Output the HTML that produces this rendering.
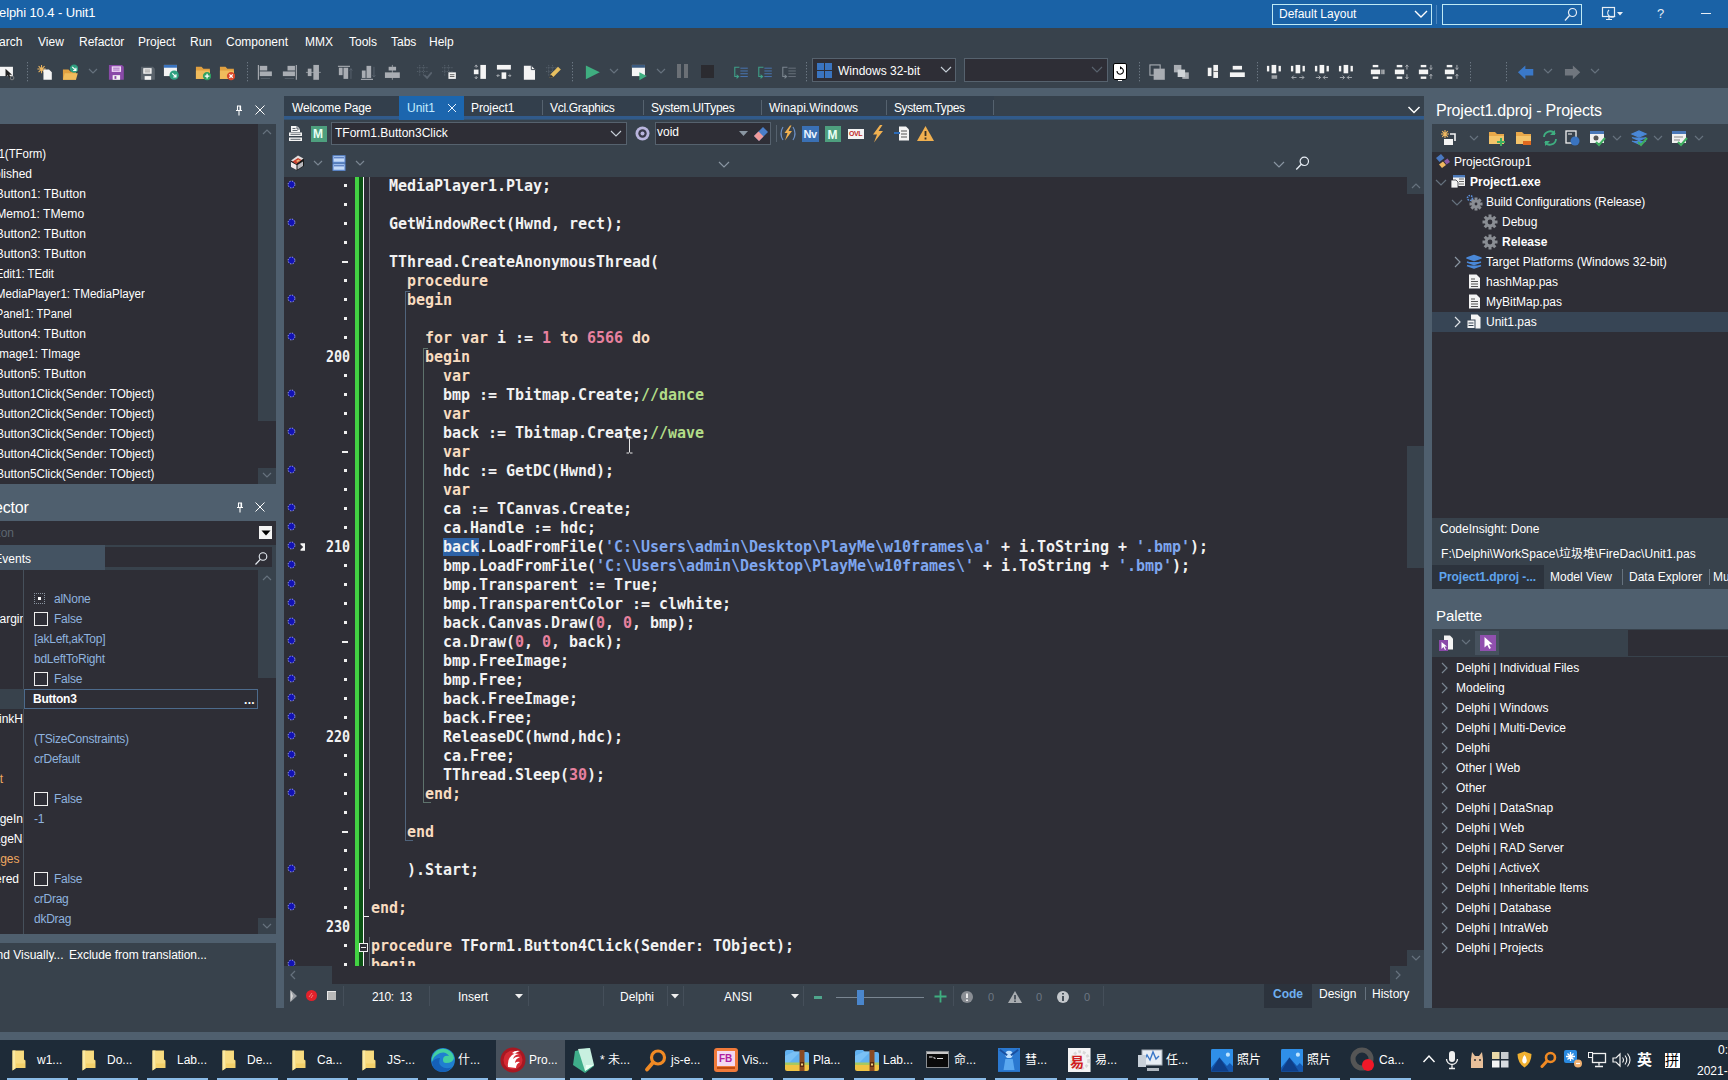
<!DOCTYPE html>
<html lang="en"><head><meta charset="utf-8"><title>Delphi 10.4 - Unit1</title>
<style>
html,body{margin:0;padding:0;}
body{width:1728px;height:1080px;overflow:hidden;background:#38424c;position:relative;font-family:"Liberation Sans","Noto Sans CJK SC",sans-serif;}
body div,body svg{position:absolute;}
.t{white-space:pre;line-height:20px;height:20px;}
.b{font-weight:bold;}
.clip{overflow:hidden;}
.code{font-family:"DejaVu Sans Mono","Liberation Mono",monospace;font-weight:bold;font-size:15px;letter-spacing:-0.031px;line-height:19px;height:19px;white-space:pre;color:#f2f2f2;}
.kw{color:#f8dcc0;}
.num{color:#e8819f;}
.str{color:#7ea6ee;}
.cm{color:#b2dc88;}
.ln{font-family:"DejaVu Sans Mono","Liberation Mono",monospace;font-weight:bold;font-size:15px;line-height:19px;height:19px;color:#f2f2f2;white-space:pre;letter-spacing:-0.031px;}
</style></head>
<body>
<div style="left:0px;top:0px;width:1728px;height:28px;background:#1a62a6;"></div>
<div class="t " style="left:-1px;top:3.0px;font-size:13px;color:#fff;letter-spacing:-0.1px;">elphi 10.4 - Unit1</div>
<div style="left:1272px;top:3.5px;width:160px;height:21px;background:#1a62a6;border:1px solid #bfeaf5;box-sizing:border-box;"></div>
<div class="t " style="left:1279px;top:3.5px;font-size:12px;color:#fff;">Default Layout</div>
<svg style="left:1414px;top:9px;" width="14" height="10" viewBox="0 0 14 10"><path d="M1 2 L7 8 L13 2" fill="none" stroke="#fff" stroke-width="1.4"/></svg>
<div style="left:1436px;top:5px;width:1px;height:19px;background:#4d86bf;"></div>
<div style="left:1442px;top:3.5px;width:140px;height:21px;background:#1a62a6;border:1px solid #bfeaf5;box-sizing:border-box;"></div>
<svg style="left:1562px;top:6px;" width="18" height="18" viewBox="0 0 18 18"><circle cx="10.5" cy="6.5" r="4" fill="none" stroke="#e8eef5" stroke-width="1.2"/><path d="M7.5 9.5 L3 14.5" stroke="#e8eef5" stroke-width="1.3"/></svg>
<svg style="left:1600px;top:4px;" width="26" height="20" viewBox="0 0 26 20"><rect x="2.5" y="3.5" width="12" height="9" fill="none" stroke="#e8eef5" stroke-width="1.2"/><path d="M6 15.5 h6 M9 12.5 v3" stroke="#e8eef5" stroke-width="1.2"/><path d="M9 6 a4 4 0 1 0 6 6" fill="none" stroke="#e8eef5" stroke-width="1.2"/><path d="M17 8 h6 l-3 3.5z" fill="#e8eef5"/></svg>
<div class="t " style="left:1657px;top:3.5px;font-size:13px;color:#e8eef5;">?</div>
<div style="left:1701px;top:13px;width:10px;height:1px;background:#e8eef5;"></div>
<div style="left:0px;top:28px;width:1728px;height:28px;background:#38424c;"></div>
<div class="t " style="left:-1px;top:31.5px;font-size:12px;color:#fff;">arch</div>
<div class="t " style="left:38px;top:31.5px;font-size:12px;color:#fff;">View</div>
<div class="t " style="left:79px;top:31.5px;font-size:12px;color:#fff;">Refactor</div>
<div class="t " style="left:138px;top:31.5px;font-size:12px;color:#fff;">Project</div>
<div class="t " style="left:190px;top:31.5px;font-size:12px;color:#fff;">Run</div>
<div class="t " style="left:226px;top:31.5px;font-size:12px;color:#fff;">Component</div>
<div class="t " style="left:305px;top:31.5px;font-size:12px;color:#fff;">MMX</div>
<div class="t " style="left:349px;top:31.5px;font-size:12px;color:#fff;">Tools</div>
<div class="t " style="left:391px;top:31.5px;font-size:12px;color:#fff;">Tabs</div>
<div class="t " style="left:429px;top:31.5px;font-size:12px;color:#fff;">Help</div>
<div style="left:0px;top:56px;width:1728px;height:32px;background:#38424c;"></div>
<div style="left:0px;top:88px;width:1728px;height:920px;background:#4f5f6e;"></div>
<div style="left:0px;top:1008px;width:1728px;height:24px;background:#38424c;"></div>
<div style="left:0px;top:1032px;width:1728px;height:8px;background:#4f5f6e;"></div>
<svg style="left:-1.5px;top:63.8px;" width="16.74" height="16.74" viewBox="0 0 18 18"><rect x="0" y="3" width="15" height="10" fill="#f4f4f4"/><path d="M7 5 v9 l2.500-2 l2 4 l1.500-1 l-2-3.500 h3z" fill="#222"/><circle cx="14" cy="15" r="2" fill="none" stroke="#888"/></svg>
<div style="left:27px;top:62px;width:1px;height:1px;background:#6b7783;"></div>
<div style="left:27px;top:63px;width:1px;height:1px;background:#4a545e;"></div>
<div style="left:27px;top:65px;width:1px;height:1px;background:#6b7783;"></div>
<div style="left:27px;top:66px;width:1px;height:1px;background:#4a545e;"></div>
<div style="left:27px;top:68px;width:1px;height:1px;background:#6b7783;"></div>
<div style="left:27px;top:69px;width:1px;height:1px;background:#4a545e;"></div>
<div style="left:27px;top:71px;width:1px;height:1px;background:#6b7783;"></div>
<div style="left:27px;top:72px;width:1px;height:1px;background:#4a545e;"></div>
<div style="left:27px;top:74px;width:1px;height:1px;background:#6b7783;"></div>
<div style="left:27px;top:75px;width:1px;height:1px;background:#4a545e;"></div>
<div style="left:27px;top:77px;width:1px;height:1px;background:#6b7783;"></div>
<div style="left:27px;top:78px;width:1px;height:1px;background:#4a545e;"></div>
<div style="left:27px;top:80px;width:1px;height:1px;background:#6b7783;"></div>
<div style="left:27px;top:81px;width:1px;height:1px;background:#4a545e;"></div>
<svg style="left:35.5px;top:63.8px;" width="16.74" height="16.74" viewBox="0 0 18 18"><path d="M6 1 v9 M1.500 5.500 h9 M2.800 2.300 l6.400 6.400 M9.200 2.300 l-6.400 6.400" stroke="#f0b860" stroke-width="1.100"/><path d="M8 6 h6 l3 3 v8 h-9z" fill="#f4f4f4"/></svg>
<svg style="left:61.5px;top:63.8px;" width="16.74" height="16.74" viewBox="0 0 18 18"><path d="M1 6 h6 l2 2 h6 v9 h-14z" fill="#e0a040"/><path d="M3 10 h14 l-2 7 h-14z" fill="#f0bc5c"/><circle cx="13" cy="5" r="4.500" fill="#2fa080"/><path d="M11 3 l4 4 M15 4 v3 h-3" stroke="#fff" stroke-width="1.200" fill="none"/></svg>
<svg style="left:88px;top:67px;" width="10" height="8" viewBox="0 0 10 8"><path d="M1 2 L5 6 L9 2" fill="none" stroke="#66727e" stroke-width="1.2"/></svg>
<svg style="left:107.5px;top:63.8px;" width="16.74" height="16.74" viewBox="0 0 18 18"><path d="M1 1 h14 l2 2 v14 h-16z" fill="#8a4aa8"/><rect x="4" y="2.500" width="10" height="6" fill="#f0d8f8"/><path d="M5.500 4.500 h7 M5.500 6.500 h7" stroke="#8a4aa8" stroke-width="0.800"/><rect x="5" y="12" width="8" height="5" fill="#f4f4f4"/><rect x="7" y="13" width="2" height="3" fill="#8a4aa8"/></svg>
<svg style="left:139.5px;top:63.8px;" width="16.74" height="16.74" viewBox="0 0 18 18"><path d="M1 3 h13 l2 2 v12 h-15z" fill="#5a636c"/><rect x="3.500" y="4.500" width="9" height="6" fill="#f4f4f4"/><path d="M5 6.500 h6 M5 8.500 h6" stroke="#777" stroke-width="0.800"/><rect x="5" y="13" width="7" height="4" fill="#f4f4f4"/></svg>
<svg style="left:162.5px;top:63.8px;" width="16.74" height="16.74" viewBox="0 0 18 18"><rect x="1" y="1" width="14" height="12" fill="#f4f4f4"/><rect x="1" y="1" width="14" height="3" fill="#3a74c0"/><circle cx="12" cy="12" r="5" fill="#2fa080"/><path d="M10 10 l4 4 M14 11 v3 h-3" stroke="#fff" stroke-width="1.200" fill="none"/></svg>
<svg style="left:194.5px;top:63.8px;" width="16.74" height="16.74" viewBox="0 0 18 18"><path d="M1 3 h6 l2 2 h7 v11 h-15z" fill="#e0a040"/><path d="M1 7 h15 v9 h-15z" fill="#f0bc5c"/><circle cx="13" cy="13" r="4.500" fill="#2fa060"/><path d="M13 10.500 v5 M10.500 13 h5" stroke="#fff" stroke-width="1.400"/></svg>
<svg style="left:218.5px;top:63.8px;" width="16.74" height="16.74" viewBox="0 0 18 18"><path d="M1 3 h6 l2 2 h7 v11 h-15z" fill="#e0a040"/><path d="M1 7 h15 v9 h-15z" fill="#f0bc5c"/><circle cx="13" cy="13" r="4.500" fill="#d8482a"/><path d="M11.200 11.200 l3.600 3.600 M14.800 11.200 l-3.600 3.600" stroke="#fff" stroke-width="1.400"/></svg>
<div style="left:247px;top:62px;width:1px;height:1px;background:#6b7783;"></div>
<div style="left:247px;top:63px;width:1px;height:1px;background:#4a545e;"></div>
<div style="left:247px;top:65px;width:1px;height:1px;background:#6b7783;"></div>
<div style="left:247px;top:66px;width:1px;height:1px;background:#4a545e;"></div>
<div style="left:247px;top:68px;width:1px;height:1px;background:#6b7783;"></div>
<div style="left:247px;top:69px;width:1px;height:1px;background:#4a545e;"></div>
<div style="left:247px;top:71px;width:1px;height:1px;background:#6b7783;"></div>
<div style="left:247px;top:72px;width:1px;height:1px;background:#4a545e;"></div>
<div style="left:247px;top:74px;width:1px;height:1px;background:#6b7783;"></div>
<div style="left:247px;top:75px;width:1px;height:1px;background:#4a545e;"></div>
<div style="left:247px;top:77px;width:1px;height:1px;background:#6b7783;"></div>
<div style="left:247px;top:78px;width:1px;height:1px;background:#4a545e;"></div>
<div style="left:247px;top:80px;width:1px;height:1px;background:#6b7783;"></div>
<div style="left:247px;top:81px;width:1px;height:1px;background:#4a545e;"></div>
<svg style="left:256.5px;top:63.8px;" width="16.74" height="16.74" viewBox="0 0 18 18"><path d="M1.500 1 v16" stroke="#a9adb3" stroke-width="1.200"/><rect x="3" y="2" width="8" height="5" fill="#a9adb3"/><rect x="3" y="8" width="13" height="5" fill="#a9adb3"/><path d="M4 15.500 h10" stroke="#59636e"/></svg>
<svg style="left:280.5px;top:63.8px;" width="16.74" height="16.74" viewBox="0 0 18 18"><path d="M16.500 1 v16" stroke="#a9adb3" stroke-width="1.200"/><rect x="7" y="2" width="8" height="5" fill="#a9adb3"/><rect x="2" y="8" width="13" height="5" fill="#a9adb3"/><path d="M4 15.500 h10" stroke="#59636e"/></svg>
<svg style="left:304.5px;top:63.8px;" width="16.74" height="16.74" viewBox="0 0 18 18"><rect x="3" y="5" width="4" height="8" fill="#a9adb3"/><rect x="9" y="1" width="6" height="16" fill="#a9adb3"/><path d="M1 9 h16" stroke="#a9adb3" stroke-width="0.800"/></svg>
<svg style="left:336.5px;top:63.8px;" width="16.74" height="16.74" viewBox="0 0 18 18"><path d="M1 2.500 h13" stroke="#a9adb3" stroke-width="1.200"/><rect x="2" y="4" width="4" height="8" fill="#a9adb3"/><rect x="7" y="4" width="5" height="12" fill="#a9adb3"/><path d="M15 5 v11 M13.500 7 l1.500-2 l1.500 2" stroke="#59636e" fill="none"/></svg>
<svg style="left:359.5px;top:63.8px;" width="16.74" height="16.74" viewBox="0 0 18 18"><path d="M1 16.500 h13" stroke="#a9adb3" stroke-width="1.200"/><rect x="2" y="7" width="4" height="8" fill="#a9adb3"/><rect x="7" y="2" width="5" height="13" fill="#a9adb3"/><path d="M15 3 v11 M13.500 12 l1.500 2 l1.500-2" stroke="#59636e" fill="none"/></svg>
<svg style="left:383.5px;top:63.8px;" width="16.74" height="16.74" viewBox="0 0 18 18"><rect x="5" y="3" width="8" height="4" fill="#a9adb3"/><rect x="1" y="9" width="16" height="6" fill="#a9adb3"/><path d="M9 1 v16" stroke="#a9adb3" stroke-width="0.800"/></svg>
<svg style="left:415.5px;top:63.8px;" width="16.74" height="16.74" viewBox="0 0 18 18"><path d="M4 1 v12 M8 1 v12 M1 4 h12 M1 8 h12" stroke="#59636e" stroke-width="0.900" stroke-dasharray="1.500 1"/><path d="M9 12 l3 3 l5-6" stroke="#59636e" stroke-width="2" fill="none"/></svg>
<svg style="left:440.5px;top:63.8px;" width="16.74" height="16.74" viewBox="0 0 18 18"><path d="M4 1 v12 M8 1 v12 M1 4 h12 M1 8 h12" stroke="#59636e" stroke-width="0.900" stroke-dasharray="1.500 1"/><rect x="8" y="9" width="8" height="7" fill="#f4f4f4"/><path d="M9.500 11.500 h5 M9.500 13.500 h5" stroke="#444" stroke-width="0.900"/></svg>
<svg style="left:471.5px;top:63.8px;" width="16.74" height="16.74" viewBox="0 0 18 18"><rect x="2" y="6" width="5" height="5" fill="#f4f4f4"/><rect x="9" y="1" width="6" height="15" fill="#f4f4f4"/><path d="M4.500 1 v3 M4.500 13 v3 M3 3 l1.500-2 l1.500 2 M3 14 l1.500 2 l1.500-2" stroke="#a9adb3" fill="none"/></svg>
<svg style="left:495.5px;top:63.8px;" width="16.74" height="16.74" viewBox="0 0 18 18"><rect x="1" y="1" width="15" height="5" fill="#f4f4f4"/><rect x="6" y="9" width="5" height="7" fill="#f4f4f4"/><path d="M1 12.500 h3 M13 12.500 h3 M2.500 11 l-1.500 1.500 l1.500 1.500 M14.500 11 l1.500 1.500 l-1.500 1.500" stroke="#a9adb3" fill="none"/></svg>
<svg style="left:521.5px;top:63.8px;" width="16.74" height="16.74" viewBox="0 0 18 18"><path d="M2 2 h8 l4 4 v11 h-12z" fill="#f4f4f4"/><path d="M10 2 v4 h4" fill="none" stroke="#38424c"/></svg>
<svg style="left:544.5px;top:63.8px;" width="16.74" height="16.74" viewBox="0 0 18 18"><path d="M4 1 v12 M8 1 v12 M1 4 h12 M1 8 h12" stroke="#59636e" stroke-width="0.900" stroke-dasharray="1.500 1"/><path d="M5 15 l1-4 l8-8 l3 3 l-8 8z" fill="#e8c060"/><path d="M5 15 l1-4 l3 3z" fill="#333"/></svg>
<div style="left:572px;top:62px;width:1px;height:1px;background:#6b7783;"></div>
<div style="left:572px;top:63px;width:1px;height:1px;background:#4a545e;"></div>
<div style="left:572px;top:65px;width:1px;height:1px;background:#6b7783;"></div>
<div style="left:572px;top:66px;width:1px;height:1px;background:#4a545e;"></div>
<div style="left:572px;top:68px;width:1px;height:1px;background:#6b7783;"></div>
<div style="left:572px;top:69px;width:1px;height:1px;background:#4a545e;"></div>
<div style="left:572px;top:71px;width:1px;height:1px;background:#6b7783;"></div>
<div style="left:572px;top:72px;width:1px;height:1px;background:#4a545e;"></div>
<div style="left:572px;top:74px;width:1px;height:1px;background:#6b7783;"></div>
<div style="left:572px;top:75px;width:1px;height:1px;background:#4a545e;"></div>
<div style="left:572px;top:77px;width:1px;height:1px;background:#6b7783;"></div>
<div style="left:572px;top:78px;width:1px;height:1px;background:#4a545e;"></div>
<div style="left:572px;top:80px;width:1px;height:1px;background:#6b7783;"></div>
<div style="left:572px;top:81px;width:1px;height:1px;background:#4a545e;"></div>
<svg style="left:583.5px;top:63.8px;" width="16.74" height="16.74" viewBox="0 0 18 18"><path d="M2 1.500 L17 9 L2 16.500z" fill="#3fae80"/></svg>
<svg style="left:609px;top:67px;" width="10" height="8" viewBox="0 0 10 8"><path d="M1 2 L5 6 L9 2" fill="none" stroke="#66727e" stroke-width="1.2"/></svg>
<svg style="left:630.5px;top:63.8px;" width="16.74" height="16.74" viewBox="0 0 18 18"><rect x="1" y="1" width="14" height="12" fill="#f4f4f4"/><rect x="1" y="1" width="14" height="3" fill="#3a5a80"/><path d="M9 9 L17 13 L9 17.500z" fill="#3fae80"/></svg>
<svg style="left:656px;top:67px;" width="10" height="8" viewBox="0 0 10 8"><path d="M1 2 L5 6 L9 2" fill="none" stroke="#66727e" stroke-width="1.2"/></svg>
<div style="left:677px;top:64px;width:4px;height:14px;background:#6b7076;"></div>
<div style="left:684px;top:64px;width:4px;height:14px;background:#6b7076;"></div>
<div style="left:701px;top:65px;width:13px;height:13px;background:#2b2b30;"></div>
<svg style="left:731.5px;top:63.8px;" width="16.74" height="16.74" viewBox="0 0 18 18"><path d="M9 4.500 h8 M9 7.500 h8 M9 10.500 h8 M9 13.500 h8" stroke="#4a78b8" stroke-width="1"/><path d="M8 3.500 h-5 v10 h3" fill="none" stroke="#3f9f88" stroke-width="1.200"/><path d="M5 11 l3 2.500 l-3 2.500z" fill="#3f9f88"/></svg>
<svg style="left:755.5px;top:63.8px;" width="16.74" height="16.74" viewBox="0 0 18 18"><path d="M9 4.500 h8 M9 7.500 h8 M9 10.500 h8 M9 13.500 h8" stroke="#4a78b8" stroke-width="1"/><path d="M8 3.500 h-5 v10 h3" fill="none" stroke="#3f9f88" stroke-width="1.200"/><path d="M5 11 l3 2.500 l-3 2.500z" fill="#3f9f88"/></svg>
<svg style="left:779.5px;top:63.8px;" width="16.74" height="16.74" viewBox="0 0 18 18"><path d="M9 4.500 h8 M9 7.500 h8 M9 10.500 h8 M9 13.500 h8" stroke="#6a747e" stroke-width="1"/><path d="M8 3.500 h-5 v10 h3" fill="none" stroke="#7a848e" stroke-width="1.200"/><path d="M5 11 l3 2.500 l-3 2.500z" fill="#7a848e"/></svg>
<div style="left:806px;top:62px;width:1px;height:1px;background:#6b7783;"></div>
<div style="left:806px;top:63px;width:1px;height:1px;background:#4a545e;"></div>
<div style="left:806px;top:65px;width:1px;height:1px;background:#6b7783;"></div>
<div style="left:806px;top:66px;width:1px;height:1px;background:#4a545e;"></div>
<div style="left:806px;top:68px;width:1px;height:1px;background:#6b7783;"></div>
<div style="left:806px;top:69px;width:1px;height:1px;background:#4a545e;"></div>
<div style="left:806px;top:71px;width:1px;height:1px;background:#6b7783;"></div>
<div style="left:806px;top:72px;width:1px;height:1px;background:#4a545e;"></div>
<div style="left:806px;top:74px;width:1px;height:1px;background:#6b7783;"></div>
<div style="left:806px;top:75px;width:1px;height:1px;background:#4a545e;"></div>
<div style="left:806px;top:77px;width:1px;height:1px;background:#6b7783;"></div>
<div style="left:806px;top:78px;width:1px;height:1px;background:#4a545e;"></div>
<div style="left:806px;top:80px;width:1px;height:1px;background:#6b7783;"></div>
<div style="left:806px;top:81px;width:1px;height:1px;background:#4a545e;"></div>
<div style="left:812px;top:58px;width:144px;height:24px;background:#2e2e36;border:1px solid #56626e;box-sizing:border-box;"></div>
<svg style="left:817px;top:63px;" width="15" height="15" viewBox="0 0 15 15"><rect x="0" y="0" width="7" height="7" fill="#3a74c0"/><rect x="8" y="0" width="7" height="7" fill="#3a74c0"/><rect x="0" y="8" width="7" height="7" fill="#3a74c0"/><rect x="8" y="8" width="7" height="7" fill="#3a74c0"/></svg>
<div class="t " style="left:838px;top:60.5px;font-size:12px;color:#fff;">Windows 32-bit</div>
<svg style="left:940px;top:64px;" width="12" height="10" viewBox="0 0 12 10"><path d="M1 3 L6 8 L11 3" fill="none" stroke="#c8d0d8" stroke-width="1.1"/></svg>
<div style="left:964px;top:58px;width:144px;height:24px;background:#2e2e36;border:1px solid #56626e;box-sizing:border-box;"></div>
<svg style="left:1091px;top:64px;" width="12" height="10" viewBox="0 0 12 10"><path d="M1 3 L6 8 L11 3" fill="none" stroke="#59636e" stroke-width="1.1"/></svg>
<svg style="left:1113px;top:63px;" width="14" height="18" viewBox="0 0 14 18"><rect x="0.500" y="0.500" width="13" height="16" rx="1.500" fill="#fff" stroke="#000" stroke-width="1"/><path d="M4 8 a3.200 3.200 0 1 0 3-3.200" fill="none" stroke="#000" stroke-width="1.100"/><path d="M7 3 l2 2 l-2 1.500z" fill="#000"/><path d="M5 17.500 h4" stroke="#fff" stroke-width="1"/></svg>
<div style="left:1139px;top:62px;width:1px;height:1px;background:#6b7783;"></div>
<div style="left:1139px;top:63px;width:1px;height:1px;background:#4a545e;"></div>
<div style="left:1139px;top:65px;width:1px;height:1px;background:#6b7783;"></div>
<div style="left:1139px;top:66px;width:1px;height:1px;background:#4a545e;"></div>
<div style="left:1139px;top:68px;width:1px;height:1px;background:#6b7783;"></div>
<div style="left:1139px;top:69px;width:1px;height:1px;background:#4a545e;"></div>
<div style="left:1139px;top:71px;width:1px;height:1px;background:#6b7783;"></div>
<div style="left:1139px;top:72px;width:1px;height:1px;background:#4a545e;"></div>
<div style="left:1139px;top:74px;width:1px;height:1px;background:#6b7783;"></div>
<div style="left:1139px;top:75px;width:1px;height:1px;background:#4a545e;"></div>
<div style="left:1139px;top:77px;width:1px;height:1px;background:#6b7783;"></div>
<div style="left:1139px;top:78px;width:1px;height:1px;background:#4a545e;"></div>
<div style="left:1139px;top:80px;width:1px;height:1px;background:#6b7783;"></div>
<div style="left:1139px;top:81px;width:1px;height:1px;background:#4a545e;"></div>
<svg style="left:1148.5px;top:63.8px;" width="16.74" height="16.74" viewBox="0 0 18 18"><rect x="1" y="1" width="11" height="11" fill="none" stroke="#a9adb3" stroke-width="1.200"/><rect x="5" y="5" width="12" height="12" fill="#a9adb3"/></svg>
<svg style="left:1172.5px;top:63.8px;" width="16.74" height="16.74" viewBox="0 0 18 18"><rect x="1" y="1" width="8" height="8" fill="#a9adb3"/><rect x="10" y="9" width="7" height="7" fill="#a9adb3"/><rect x="5" y="6" width="8" height="8" fill="#d0d4d8"/></svg>
<svg style="left:1204.5px;top:63.8px;" width="16.74" height="16.74" viewBox="0 0 18 18"><rect x="3" y="4" width="4" height="9" fill="#f4f4f4"/><rect x="9" y="1" width="5" height="14" fill="#f4f4f4"/><path d="M9 8 h5" stroke="#666"/></svg>
<svg style="left:1228.5px;top:63.8px;" width="16.74" height="16.74" viewBox="0 0 18 18"><rect x="4" y="2" width="10" height="4" fill="#f4f4f4"/><rect x="1" y="9" width="16" height="5" fill="#f4f4f4"/></svg>
<div style="left:1257px;top:62px;width:1px;height:1px;background:#6b7783;"></div>
<div style="left:1257px;top:63px;width:1px;height:1px;background:#4a545e;"></div>
<div style="left:1257px;top:65px;width:1px;height:1px;background:#6b7783;"></div>
<div style="left:1257px;top:66px;width:1px;height:1px;background:#4a545e;"></div>
<div style="left:1257px;top:68px;width:1px;height:1px;background:#6b7783;"></div>
<div style="left:1257px;top:69px;width:1px;height:1px;background:#4a545e;"></div>
<div style="left:1257px;top:71px;width:1px;height:1px;background:#6b7783;"></div>
<div style="left:1257px;top:72px;width:1px;height:1px;background:#4a545e;"></div>
<div style="left:1257px;top:74px;width:1px;height:1px;background:#6b7783;"></div>
<div style="left:1257px;top:75px;width:1px;height:1px;background:#4a545e;"></div>
<div style="left:1257px;top:77px;width:1px;height:1px;background:#6b7783;"></div>
<div style="left:1257px;top:78px;width:1px;height:1px;background:#4a545e;"></div>
<div style="left:1257px;top:80px;width:1px;height:1px;background:#6b7783;"></div>
<div style="left:1257px;top:81px;width:1px;height:1px;background:#4a545e;"></div>
<svg style="left:1265.5px;top:63.8px;" width="16.74" height="16.74" viewBox="0 0 18 18"><rect x="1" y="2" width="2.500" height="6" fill="#f4f4f4"/><rect x="6" y="1" width="5" height="9" fill="#f4f4f4"/><rect x="13.500" y="2" width="2.500" height="6" fill="#f4f4f4"/><path d="M6 13 h6 M6 15 h6" stroke="#f4f4f4" stroke-width="1"/></svg>
<svg style="left:1289.5px;top:63.8px;" width="16.74" height="16.74" viewBox="0 0 18 18"><rect x="1" y="2" width="2.500" height="6" fill="#f4f4f4"/><rect x="6" y="1" width="5" height="9" fill="#f4f4f4"/><rect x="13.500" y="2" width="2.500" height="6" fill="#f4f4f4"/><path d="M2 14.500 h5 M10 14.500 h5 M4 12.500 l-2 2 l2 2 M13 12.500 l2 2 l-2 2" stroke="#a9adb3" fill="none"/></svg>
<svg style="left:1313.5px;top:63.8px;" width="16.74" height="16.74" viewBox="0 0 18 18"><rect x="1" y="2" width="2.500" height="6" fill="#f4f4f4"/><rect x="6" y="1" width="5" height="9" fill="#f4f4f4"/><rect x="13.500" y="2" width="2.500" height="6" fill="#f4f4f4"/><path d="M2 14.500 h5 M10 14.500 h5 M5 12.500 l2 2 l-2 2 M12 12.500 l-2 2 l2 2" stroke="#a9adb3" fill="none"/></svg>
<svg style="left:1337.5px;top:63.8px;" width="16.74" height="16.74" viewBox="0 0 18 18"><rect x="1" y="2" width="2.500" height="6" fill="#f4f4f4"/><rect x="6" y="1" width="5" height="9" fill="#f4f4f4"/><rect x="13.500" y="2" width="2.500" height="6" fill="#f4f4f4"/><path d="M2 14.500 h5 M10 14.500 h5 M5 12.500 l2 2 l-2 2 M12 12.500 l-2 2 l2 2" stroke="#a9adb3" fill="none"/></svg>
<svg style="left:1368.5px;top:63.8px;" width="16.74" height="16.74" viewBox="0 0 18 18"><rect x="4" y="1" width="6" height="2.500" fill="#f4f4f4"/><rect x="2" y="6" width="10" height="5" fill="#f4f4f4"/><rect x="4" y="13.500" width="6" height="2.500" fill="#f4f4f4"/><path d="M14 6 v5 M16 6 v5" stroke="#f4f4f4" stroke-width="1"/></svg>
<svg style="left:1392.5px;top:63.8px;" width="16.74" height="16.74" viewBox="0 0 18 18"><rect x="4" y="1" width="6" height="2.500" fill="#f4f4f4"/><rect x="2" y="6" width="10" height="5" fill="#f4f4f4"/><rect x="4" y="13.500" width="6" height="2.500" fill="#f4f4f4"/><path d="M15 1 v5 M15 11 v5 M13.500 3 l1.500-2 l1.500 2 M13.500 14 l1.500 2 l1.500-2" stroke="#a9adb3" fill="none"/></svg>
<svg style="left:1416.5px;top:63.8px;" width="16.74" height="16.74" viewBox="0 0 18 18"><rect x="4" y="1" width="6" height="2.500" fill="#f4f4f4"/><rect x="2" y="6" width="10" height="5" fill="#f4f4f4"/><rect x="4" y="13.500" width="6" height="2.500" fill="#f4f4f4"/><path d="M15 1 v5 M15 11 v5 M13.500 4 l1.500 2 l1.500-2 M13.500 13 l1.500-2 l1.500 2" stroke="#a9adb3" fill="none"/></svg>
<svg style="left:1442.5px;top:63.8px;" width="16.74" height="16.74" viewBox="0 0 18 18"><rect x="4" y="1" width="6" height="2.500" fill="#f4f4f4"/><rect x="2" y="6" width="10" height="5" fill="#f4f4f4"/><rect x="4" y="13.500" width="6" height="2.500" fill="#f4f4f4"/><path d="M15 1 v5 M15 11 v5 M13.500 4 l1.500 2 l1.500-2 M13.500 13 l1.500-2 l1.500 2" stroke="#a9adb3" fill="none"/></svg>
<div style="left:1470px;top:62px;width:1px;height:1px;background:#6b7783;"></div>
<div style="left:1470px;top:63px;width:1px;height:1px;background:#4a545e;"></div>
<div style="left:1470px;top:65px;width:1px;height:1px;background:#6b7783;"></div>
<div style="left:1470px;top:66px;width:1px;height:1px;background:#4a545e;"></div>
<div style="left:1470px;top:68px;width:1px;height:1px;background:#6b7783;"></div>
<div style="left:1470px;top:69px;width:1px;height:1px;background:#4a545e;"></div>
<div style="left:1470px;top:71px;width:1px;height:1px;background:#6b7783;"></div>
<div style="left:1470px;top:72px;width:1px;height:1px;background:#4a545e;"></div>
<div style="left:1470px;top:74px;width:1px;height:1px;background:#6b7783;"></div>
<div style="left:1470px;top:75px;width:1px;height:1px;background:#4a545e;"></div>
<div style="left:1470px;top:77px;width:1px;height:1px;background:#6b7783;"></div>
<div style="left:1470px;top:78px;width:1px;height:1px;background:#4a545e;"></div>
<div style="left:1470px;top:80px;width:1px;height:1px;background:#6b7783;"></div>
<div style="left:1470px;top:81px;width:1px;height:1px;background:#4a545e;"></div>
<div style="left:1506px;top:62px;width:1px;height:1px;background:#6b7783;"></div>
<div style="left:1506px;top:63px;width:1px;height:1px;background:#4a545e;"></div>
<div style="left:1506px;top:65px;width:1px;height:1px;background:#6b7783;"></div>
<div style="left:1506px;top:66px;width:1px;height:1px;background:#4a545e;"></div>
<div style="left:1506px;top:68px;width:1px;height:1px;background:#6b7783;"></div>
<div style="left:1506px;top:69px;width:1px;height:1px;background:#4a545e;"></div>
<div style="left:1506px;top:71px;width:1px;height:1px;background:#6b7783;"></div>
<div style="left:1506px;top:72px;width:1px;height:1px;background:#4a545e;"></div>
<div style="left:1506px;top:74px;width:1px;height:1px;background:#6b7783;"></div>
<div style="left:1506px;top:75px;width:1px;height:1px;background:#4a545e;"></div>
<div style="left:1506px;top:77px;width:1px;height:1px;background:#6b7783;"></div>
<div style="left:1506px;top:78px;width:1px;height:1px;background:#4a545e;"></div>
<div style="left:1506px;top:80px;width:1px;height:1px;background:#6b7783;"></div>
<div style="left:1506px;top:81px;width:1px;height:1px;background:#4a545e;"></div>
<svg style="left:1516.5px;top:63.8px;" width="17.67" height="16.74" viewBox="0 0 19 18"><path d="M1 9 L9 1.500 V5.500 H17.500 V12.500 H9 V16.500z" fill="#3a78c8"/></svg>
<svg style="left:1543px;top:67px;" width="10" height="8" viewBox="0 0 10 8"><path d="M1 2 L5 6 L9 2" fill="none" stroke="#66727e" stroke-width="1.2"/></svg>
<svg style="left:1563.5px;top:63.8px;" width="17.67" height="16.74" viewBox="0 0 19 18"><path d="M17.500 9 L9.500 1.500 V5.500 H1 V12.500 H9.500 V16.500z" fill="#70767e"/></svg>
<svg style="left:1590px;top:67px;" width="10" height="8" viewBox="0 0 10 8"><path d="M1 2 L5 6 L9 2" fill="none" stroke="#66727e" stroke-width="1.2"/></svg>
<svg style="left:235px;top:104.5px;" width="8" height="11" viewBox="0 0 8 11"><path d="M2 1 h4 M2.500 1 v4.500 M1 5.500 h6 M4 5.500 v5" fill="none" stroke="#fff" stroke-width="1.100"/><rect x="4.500" y="1" width="1.600" height="4.500" fill="#fff"/></svg>
<svg style="left:253.5px;top:103.5px;" width="12" height="12" viewBox="0 0 12 12"><path d="M1.5 1.5 L10.5 10.5 M10.5 1.5 L1.5 10.5" stroke="#fff" stroke-width="1.0"/></svg>
<div style="left:0px;top:124px;width:258px;height:360px;background:#2e2e36;"></div>
<div style="left:258px;top:124px;width:18px;height:360px;background:#2e2e36;"></div>
<div style="left:258px;top:124px;width:18px;height:297px;background:#38424c;"></div>
<div style="left:258px;top:468px;width:18px;height:16px;background:#38424c;"></div>
<svg style="left:262px;top:128px;" width="10" height="8" viewBox="0 0 10 8"><path d="M1 6 L5 2 L9 6" fill="none" stroke="#66727e" stroke-width="1.2"/></svg>
<svg style="left:262px;top:471px;" width="10" height="8" viewBox="0 0 10 8"><path d="M1 2 L5 6 L9 2" fill="none" stroke="#66727e" stroke-width="1.2"/></svg>
<div class="clip" style="left:0;top:124px;width:258px;height:360px;">
<div class="t" style="right:212px;top:20px;font-size:12px;color:#fff;transform:scaleX(0.950);transform-origin:100% 50%;">Form1(TForm)</div>
<div class="t" style="right:226px;top:40px;font-size:12px;color:#fff;transform:scaleX(1.000);transform-origin:100% 50%;">Published</div>
<div class="t" style="right:172px;top:60px;font-size:12px;color:#fff;transform:scaleX(1.002);transform-origin:100% 50%;">Button1: TButton</div>
<div class="t" style="right:174px;top:80px;font-size:12px;color:#fff;transform:scaleX(1.010);transform-origin:100% 50%;">Memo1: TMemo</div>
<div class="t" style="right:172px;top:100px;font-size:12px;color:#fff;transform:scaleX(1.002);transform-origin:100% 50%;">Button2: TButton</div>
<div class="t" style="right:172px;top:120px;font-size:12px;color:#fff;transform:scaleX(1.002);transform-origin:100% 50%;">Button3: TButton</div>
<div class="t" style="right:204px;top:140px;font-size:12px;color:#fff;transform:scaleX(0.939);transform-origin:100% 50%;">Edit1: TEdit</div>
<div class="t" style="right:113px;top:160px;font-size:12px;color:#fff;transform:scaleX(0.969);transform-origin:100% 50%;">MediaPlayer1: TMediaPlayer</div>
<div class="t" style="right:186px;top:180px;font-size:12px;color:#fff;transform:scaleX(0.929);transform-origin:100% 50%;">Panel1: TPanel</div>
<div class="t" style="right:172px;top:200px;font-size:12px;color:#fff;transform:scaleX(1.002);transform-origin:100% 50%;">Button4: TButton</div>
<div class="t" style="right:178px;top:220px;font-size:12px;color:#fff;transform:scaleX(0.964);transform-origin:100% 50%;">Image1: TImage</div>
<div class="t" style="right:172px;top:240px;font-size:12px;color:#fff;transform:scaleX(1.002);transform-origin:100% 50%;">Button5: TButton</div>
<div class="t" style="right:104px;top:260px;font-size:12px;color:#fff;transform:scaleX(0.974);transform-origin:100% 50%;">Button1Click(Sender: TObject)</div>
<div class="t" style="right:104px;top:280px;font-size:12px;color:#fff;transform:scaleX(0.974);transform-origin:100% 50%;">Button2Click(Sender: TObject)</div>
<div class="t" style="right:104px;top:300px;font-size:12px;color:#fff;transform:scaleX(0.974);transform-origin:100% 50%;">Button3Click(Sender: TObject)</div>
<div class="t" style="right:104px;top:320px;font-size:12px;color:#fff;transform:scaleX(0.974);transform-origin:100% 50%;">Button4Click(Sender: TObject)</div>
<div class="t" style="right:104px;top:340px;font-size:12px;color:#fff;transform:scaleX(0.974);transform-origin:100% 50%;">Button5Click(Sender: TObject)</div>
</div>
<div class="t " style="right:1699.3px;top:497.5px;font-size:16px;color:#fff;letter-spacing:-0.2px;">Object Inspector</div>
<svg style="left:235.5px;top:501.5px;" width="8" height="11" viewBox="0 0 8 11"><path d="M2 1 h4 M2.500 1 v4.500 M1 5.500 h6 M4 5.500 v5" fill="none" stroke="#fff" stroke-width="1.100"/><rect x="4.500" y="1" width="1.600" height="4.500" fill="#fff"/></svg>
<svg style="left:253.5px;top:500.5px;" width="12" height="12" viewBox="0 0 12 12"><path d="M1.5 1.5 L10.5 10.5 M10.5 1.5 L1.5 10.5" stroke="#fff" stroke-width="1.0"/></svg>
<div style="left:0px;top:521px;width:276px;height:24px;background:#2e2e36;"></div>
<div class="t " style="right:1714px;top:523.0px;font-size:12px;color:#5d6670;">Button3 TButton</div>
<div style="left:259px;top:526px;width:13px;height:13px;background:#f4f4f4;"></div>
<svg style="left:260.5px;top:530px;" width="10" height="7" viewBox="0 0 10 7"><path d="M0.5 0.5 h9 l-4.5 5z" fill="#000"/></svg>
<div style="left:0px;top:545px;width:276px;height:25px;background:#38424c;"></div>
<div style="left:0px;top:545px;width:105px;height:25px;background:#445362;"></div>
<div class="t " style="right:1697px;top:549.0px;font-size:12px;color:#fff;">Events</div>
<div style="left:105px;top:547px;width:167px;height:20px;background:#2e2e36;"></div>
<svg style="left:253px;top:550px;" width="18" height="18" viewBox="0 0 18 18"><circle cx="10" cy="6.5" r="3.8" fill="none" stroke="#e8eef5" stroke-width="1.1"/><path d="M7.3 9.3 L2.5 14.5" stroke="#e8eef5" stroke-width="1.2"/></svg>
<div style="left:0px;top:570px;width:258px;height:364px;background:#2e2e36;"></div>
<div style="left:23px;top:570px;width:1px;height:364px;background:#46505b;"></div>
<div style="left:258px;top:570px;width:18px;height:364px;background:#2e2e36;"></div>
<div style="left:258px;top:570px;width:18px;height:108px;background:#38424c;"></div>
<div style="left:258px;top:918px;width:18px;height:16px;background:#38424c;"></div>
<svg style="left:262px;top:574px;" width="10" height="8" viewBox="0 0 10 8"><path d="M1 6 L5 2 L9 6" fill="none" stroke="#66727e" stroke-width="1.2"/></svg>
<svg style="left:262px;top:922px;" width="10" height="8" viewBox="0 0 10 8"><path d="M1 2 L5 6 L9 2" fill="none" stroke="#66727e" stroke-width="1.2"/></svg>
<div class="clip" style="left:0;top:570px;width:258px;height:364px;">
<div style="left:0;top:119px;width:24px;height:20px;background:#38424c;"></div>
<div style="left:24px;top:119px;width:234px;height:20px;border:1px solid #4d6b8c;box-sizing:border-box;"></div>
<div class="t" style="left:54px;top:19px;font-size:12px;color:#8fb3df;letter-spacing:-0.25px;">alNone</div>
<div class="t" style="left:54px;top:39px;font-size:12px;color:#8fb3df;letter-spacing:-0.25px;">False</div>
<div class="t" style="left:34px;top:59px;font-size:12px;color:#8fb3df;letter-spacing:-0.25px;">[akLeft,akTop]</div>
<div class="t" style="left:34px;top:79px;font-size:12px;color:#8fb3df;letter-spacing:-0.25px;">bdLeftToRight</div>
<div class="t" style="left:54px;top:99px;font-size:12px;color:#8fb3df;letter-spacing:-0.25px;">False</div>
<div class="t" style="left:33px;top:119px;font-size:12px;color:#fff;letter-spacing:-0.25px;font-weight:bold;">Button3</div>
<div class="t" style="left:244px;top:120px;font-size:12px;color:#fff;letter-spacing:-0.25px;font-weight:bold;letter-spacing:0.3px;">...</div>
<div class="t" style="left:34px;top:159px;font-size:12px;color:#8fb3df;letter-spacing:-0.25px;">(TSizeConstraints)</div>
<div class="t" style="left:34px;top:179px;font-size:12px;color:#8fb3df;letter-spacing:-0.25px;">crDefault</div>
<div class="t" style="left:54px;top:219px;font-size:12px;color:#8fb3df;letter-spacing:-0.25px;">False</div>
<div class="t" style="left:34px;top:239px;font-size:12px;color:#8fb3df;letter-spacing:-0.25px;">-1</div>
<div class="t" style="left:54px;top:299px;font-size:12px;color:#8fb3df;letter-spacing:-0.25px;">False</div>
<div class="t" style="left:34px;top:319px;font-size:12px;color:#8fb3df;letter-spacing:-0.25px;">crDrag</div>
<div class="t" style="left:34px;top:339px;font-size:12px;color:#8fb3df;letter-spacing:-0.25px;">dkDrag</div>
<div class="t" style="left:34px;top:359px;font-size:12px;color:#8fb3df;letter-spacing:-0.25px;">dmManual</div>
<div class="clip" style="left:0;top:0;width:23px;height:364px;">
<div class="t" style="right:3.5px;top:39px;font-size:12px;color:#fff;">AlignWithMargi<span style="position:absolute;left:100%;top:0;">ns</span></div>
<div class="t" style="right:0px;top:139px;font-size:12px;color:#fff;">CommandLinkH<span style="position:absolute;left:100%;top:0;">int</span></div>
<div class="t" style="right:20px;top:199px;font-size:12px;color:#f0a860;">CustomHint<span style="position:absolute;left:100%;top:0;"></span></div>
<div class="t" style="right:0px;top:239px;font-size:12px;color:#fff;">DisabledImageIn<span style="position:absolute;left:100%;top:0;">dex</span></div>
<div class="t" style="right:0.5px;top:259px;font-size:12px;color:#fff;">DisabledImageN<span style="position:absolute;left:100%;top:0;">ame</span></div>
<div class="t" style="right:3.5px;top:279px;font-size:12px;color:#f0a860;">DisabledImages<span style="position:absolute;left:100%;top:0;"></span></div>
<div class="t" style="right:4px;top:299px;font-size:12px;color:#fff;">DoubleBuffered<span style="position:absolute;left:100%;top:0;"></span></div>
</div>
</div>
<div style="left:34px;top:593px;width:11px;height:11px;background:transparent;border:1px dotted #8a94a0;box-sizing:border-box;"></div>
<div style="left:38px;top:597px;width:3px;height:3px;background:#fff;"></div>
<div style="left:34px;top:612px;width:14px;height:14px;background:transparent;border:1px solid #f0f0f0;box-sizing:border-box;"></div>
<div style="left:34px;top:672px;width:14px;height:14px;background:transparent;border:1px solid #f0f0f0;box-sizing:border-box;"></div>
<div style="left:34px;top:792px;width:14px;height:14px;background:transparent;border:1px solid #f0f0f0;box-sizing:border-box;"></div>
<div style="left:34px;top:872px;width:14px;height:14px;background:transparent;border:1px solid #f0f0f0;box-sizing:border-box;"></div>
<div style="left:0px;top:943px;width:276px;height:65px;background:#38424c;"></div>
<div style="left:276px;top:943px;width:8px;height:65px;background:#4f5f6e;"></div>
<div class="t " style="right:1664.5px;top:944.5px;font-size:12px;color:#fff;">Bind Visually...</div>
<div class="t " style="left:69px;top:944.5px;font-size:12px;color:#fff;letter-spacing:-0.03px;">Exclude from translation...</div>
<div style="left:284px;top:96px;width:1140px;height:21px;background:#36414c;"></div>
<div style="left:284px;top:96px;width:710px;height:21px;background:#333f4c;"></div>
<div style="left:284px;top:115.6px;width:1140px;height:4.6px;background:#34526f;"></div>
<div style="left:284px;top:116.4px;width:1140px;height:3px;background:#315a8a;"></div>
<div style="left:399px;top:96px;width:65px;height:24px;background:#1c66ae;"></div>
<div class="t " style="left:292px;top:97.5px;font-size:12px;color:#fff;letter-spacing:-0.15px;">Welcome Page</div>
<div class="t " style="left:407px;top:97.5px;font-size:12px;color:#c4ecff;letter-spacing:0px;">Unit1</div>
<div class="t " style="left:471px;top:97.5px;font-size:12px;color:#fff;letter-spacing:-0.1px;">Project1</div>
<div class="t " style="left:550px;top:97.5px;font-size:12px;color:#fff;letter-spacing:-0.3px;">Vcl.Graphics</div>
<div class="t " style="left:651px;top:97.5px;font-size:12px;color:#fff;letter-spacing:-0.28px;">System.UITypes</div>
<div class="t " style="left:769px;top:97.5px;font-size:12px;color:#fff;letter-spacing:0.03px;">Winapi.Windows</div>
<div class="t " style="left:894px;top:97.5px;font-size:12px;color:#fff;letter-spacing:-0.4px;">System.Types</div>
<svg style="left:446px;top:101.5px;" width="12" height="12" viewBox="0 0 12 12"><path d="M2 2 L10 10 M10 2 L2 10" stroke="#e8f4ff" stroke-width="1"/></svg>
<div style="left:542px;top:100px;width:1px;height:15px;background:#55626f;"></div>
<div style="left:643px;top:100px;width:1px;height:15px;background:#55626f;"></div>
<div style="left:761px;top:100px;width:1px;height:15px;background:#55626f;"></div>
<div style="left:886px;top:100px;width:1px;height:15px;background:#55626f;"></div>
<div style="left:993px;top:100px;width:1px;height:15px;background:#55626f;"></div>
<svg style="left:1406.5px;top:104.5px;" width="14" height="10" viewBox="0 0 14 10"><path d="M1.500 2 L7 7.500 L12.500 2" fill="none" stroke="#fff" stroke-width="1.500"/></svg>
<div style="left:284px;top:120px;width:1140px;height:57px;background:#38424c;"></div>
<div style="left:331px;top:122px;width:296px;height:23px;background:#2e2e36;border:1px solid #56626e;box-sizing:border-box;"></div>
<div class="t " style="left:335px;top:122.5px;font-size:12px;color:#fff;">TForm1.Button3Click</div>
<svg style="left:610px;top:128px;" width="12" height="10" viewBox="0 0 12 10"><path d="M1 3 L6 8 L11 3" fill="none" stroke="#c8d0d8" stroke-width="1.1"/></svg>
<div style="left:655px;top:122px;width:116px;height:23px;background:#2e2e36;border:1px solid #56626e;box-sizing:border-box;"></div>
<div class="t " style="left:657px;top:122.0px;font-size:12px;color:#fff;">void</div>
<svg style="left:739px;top:131px;" width="10" height="6" viewBox="0 0 10 6"><path d="M0 0 h9 l-4.5 5z" fill="#8a96a2"/></svg>
<div style="left:311px;top:126px;width:16px;height:16px;background:#4e9f7e;"></div>
<div class="t " style="left:313px;top:124.0px;font-size:12px;color:#e8fff4;font-weight:bold;">M</div>
<svg style="left:288px;top:125px;" width="15" height="17" viewBox="0 0 15 17"><path d="M3 1 h6 l3 3 v3 h-9z" fill="#f4f4f4"/><path d="M9 1 v3 h3" fill="none" stroke="#38424c" stroke-width="0.8"/><path d="M4.500 3.500 h3 M4.500 5.500 h5" stroke="#38424c" stroke-width="0.8"/><rect x="1" y="7.500" width="13" height="3.500" fill="#f4f4f4"/><rect x="1" y="12.500" width="13" height="3.500" fill="#f4f4f4"/><path d="M2.500 9.300 h10 M2.500 14.300 h10" stroke="#38424c" stroke-width="0.800"/></svg>
<svg style="left:634px;top:125px;" width="17" height="17" viewBox="0 0 17 17"><circle cx="8.500" cy="8.500" r="7" fill="#b9b5dd"/><circle cx="8.500" cy="8.500" r="4.200" fill="#3a3a4a"/><circle cx="8.500" cy="8.500" r="2" fill="#b9b5dd"/></svg>
<svg style="left:752px;top:125px;" width="18" height="17" viewBox="0 0 18 17"><path d="M2 11 L11 2 L16 7 L7 16z" fill="#4a7ec8"/><path d="M2 11 L6.500 6.500 L11.500 11.500 L7 16z" fill="#f09a9a"/></svg>
<div style="left:776px;top:125px;width:1px;height:17px;background:#56626e;"></div>
<svg style="left:778px;top:124px;" width="20" height="19" viewBox="0 0 20 19"><path d="M5 3 q-4 6.5 0 13 M15 3 q4 6.5 0 13" fill="none" stroke="#6b8fc4" stroke-width="1.2"/><path d="M12 1.500 l-5.500 7.500 h3 l-2.500 7.500 l7-9.500 h-3.500 l3-5.500z" fill="#f0b050"/></svg>
<div style="left:802px;top:126px;width:17px;height:16px;background:#3a70b4;"></div>
<div class="t " style="left:803.5px;top:124.0px;font-size:11px;color:#eaf4ff;font-weight:bold;letter-spacing:-0.5px;">Nv</div>
<div style="left:825px;top:126px;width:16px;height:16px;background:#4e9f7e;"></div>
<div class="t " style="left:827.5px;top:124.5px;font-size:12px;color:#e8fff4;font-weight:bold;">M</div>
<div style="left:848px;top:129px;width:16px;height:10px;background:#f4f4f4;"></div>
<div class="t " style="left:849px;top:124.0px;font-size:7px;color:#c02828;font-weight:bold;letter-spacing:-0.4px;">OVL</div>
<svg style="left:871px;top:124px;" width="14" height="19" viewBox="0 0 14 19"><path d="M9 1 l-7 9.500 h4 l-3 8 l9-11.500 h-4.500 l4-6z" fill="#f0b050"/></svg>
<svg style="left:893px;top:125px;" width="18" height="17" viewBox="0 0 18 17"><path d="M6 1.5 h7 l3 3 v11 h-10z" fill="#f4f4f4"/><path d="M8 6 h6 M8 9 h6 M8 12 h6" stroke="#555" stroke-width="1"/><path d="M1 8 h6" stroke="#2d6cb8" stroke-width="2"/></svg>
<svg style="left:916px;top:125px;" width="19" height="17" viewBox="0 0 19 17"><path d="M9.5 1 L18 16 H1z" fill="#f0b050"/><path d="M9.5 6 v5 M9.5 12.5 v2" stroke="#3a3020" stroke-width="1.8"/></svg>
<svg style="left:289px;top:154px;" width="17" height="18" viewBox="0 0 17 18"><path d="M2 7 L9 2 L15 5 L15 12 L8 16.500 L2 13z" fill="#1a1a1a"/><path d="M2 6.500 L9 1.500 L14.500 4.500 L7.500 9.500z" fill="#e4dede"/><path d="M3.500 7.500 L9 4 L12.500 6 L7 10z" fill="#c8402e"/><path d="M7 7 l2.500-1.500 l1.500 1 l-2.500 1.500z" fill="#f0b878"/><path d="M2 8 L7.500 11 V16 L2 13z" fill="#f0e8e8"/><path d="M8.500 11 L14 7.500 V12 L8.500 15.500z" fill="#b8b8bc"/></svg>
<svg style="left:313.4px;top:159px;" width="10" height="8" viewBox="0 0 10 8"><path d="M1 2 L5 6 L9 2" fill="none" stroke="#7a8692" stroke-width="1.2"/></svg>
<svg style="left:331.5px;top:155px;" width="14" height="16" viewBox="0 0 14 16"><rect x="1" y="0.800" width="12" height="6.500" fill="#c4daf8" stroke="#5a86d0" stroke-width="1.100"/><path d="M2 2.800 h10" stroke="#3a62b0" stroke-width="1"/><rect x="1" y="8.800" width="12" height="6.500" fill="#c4daf8" stroke="#5a86d0" stroke-width="1.100"/><path d="M2 10.800 h10" stroke="#3a62b0" stroke-width="1"/></svg>
<svg style="left:354.5px;top:159px;" width="10" height="8" viewBox="0 0 10 8"><path d="M1 2 L5 6 L9 2" fill="none" stroke="#7a8692" stroke-width="1.2"/></svg>
<svg style="left:717.5px;top:158.5px;" width="12" height="10" viewBox="0 0 12 10"><path d="M1 3 L6 8 L11 3" fill="none" stroke="#8a96a2" stroke-width="1.2"/></svg>
<svg style="left:1272.5px;top:158.5px;" width="12" height="10" viewBox="0 0 12 10"><path d="M1 3 L6 8 L11 3" fill="none" stroke="#8a96a2" stroke-width="1.2"/></svg>
<svg style="left:1294px;top:155px;" width="16" height="16" viewBox="0 0 16 16"><circle cx="10.300" cy="6.300" r="4.200" fill="none" stroke="#e8eef5" stroke-width="1.200"/><path d="M7.300 9.300 L2.300 14.500" stroke="#e8eef5" stroke-width="1.300"/></svg>
<div style="left:284px;top:177px;width:1123px;height:789px;background:#2e2e36;"></div>
<div style="left:1407px;top:177px;width:17px;height:789px;background:#2e2e36;"></div>
<div style="left:1407px;top:177px;width:17px;height:17px;background:#38424c;"></div>
<div style="left:1407px;top:446px;width:17px;height:122px;background:#38424c;"></div>
<div style="left:1407px;top:950px;width:17px;height:16px;background:#38424c;"></div>
<svg style="left:1410.5px;top:182px;" width="10" height="8" viewBox="0 0 10 8"><path d="M1 6 L5 2 L9 6" fill="none" stroke="#66727e" stroke-width="1.2"/></svg>
<svg style="left:1410.5px;top:954px;" width="10" height="8" viewBox="0 0 10 8"><path d="M1 2 L5 6 L9 2" fill="none" stroke="#66727e" stroke-width="1.2"/></svg>
<div style="left:284px;top:966px;width:1140px;height:18px;background:#2e2e36;"></div>
<div style="left:284px;top:966px;width:48px;height:18px;background:#38424c;"></div>
<div style="left:1390px;top:966px;width:34px;height:18px;background:#38424c;"></div>
<svg style="left:289px;top:970px;" width="8" height="10" viewBox="0 0 8 10"><path d="M6 1 L2 5 L6 9" fill="none" stroke="#66727e" stroke-width="1.2"/></svg>
<svg style="left:1394px;top:970px;" width="8" height="10" viewBox="0 0 8 10"><path d="M2 1 L6 5 L2 9" fill="none" stroke="#66727e" stroke-width="1.2"/></svg>
<div class="clip" style="left:284px;top:177px;width:1123px;height:789px;">
<div style="left:70.60000000000002px;top:0;width:4.6px;height:789px;background:#43d243;"></div>
<div style="left:75.19999999999999px;top:0;width:3.5px;height:789px;background:#0b5313;"></div>
<div style="left:78.89999999999998px;top:0;width:1.4px;height:789px;background:#f4f4f4;"></div>
<div style="left:85.19999999999999px;top:0;width:1px;height:712px;background:#77797e;"></div>
<div class="code" style="left:105px;top:-0.5px;">MediaPlayer1.Play;</div>
<div style="left:60px;top:7.0px;width:3px;height:3px;background:#f0f0f0;"></div>
 <svg style="left:3px;top:3.4000000000000004px;" width="9" height="9" viewBox="0 0 9 9"><circle cx="4.500" cy="4.500" r="3.400" fill="#1212b4" stroke="#b8c0ff" stroke-width="0.900" stroke-dasharray="1.300 1.370"/></svg>
<div style="left:60px;top:26.0px;width:3px;height:3px;background:#f0f0f0;"></div>
<div class="code" style="left:105px;top:37.5px;">GetWindowRect(Hwnd, rect);</div>
<div style="left:60px;top:45.0px;width:3px;height:3px;background:#f0f0f0;"></div>
 <svg style="left:3px;top:41.4px;" width="9" height="9" viewBox="0 0 9 9"><circle cx="4.500" cy="4.500" r="3.400" fill="#1212b4" stroke="#b8c0ff" stroke-width="0.900" stroke-dasharray="1.300 1.370"/></svg>
<div style="left:60px;top:64.0px;width:3px;height:3px;background:#f0f0f0;"></div>
<div class="code" style="left:105px;top:75.5px;">TThread.CreateAnonymousThread(</div>
<div style="left:58px;top:83.5px;width:6px;height:2px;background:#f0f0f0;"></div>
 <svg style="left:3px;top:79.4px;" width="9" height="9" viewBox="0 0 9 9"><circle cx="4.500" cy="4.500" r="3.400" fill="#1212b4" stroke="#b8c0ff" stroke-width="0.900" stroke-dasharray="1.300 1.370"/></svg>
<div class="code" style="left:123px;top:94.5px;"><span class="kw">procedure</span></div>
<div style="left:60px;top:102.0px;width:3px;height:3px;background:#f0f0f0;"></div>
<div class="code" style="left:123px;top:113.5px;"><span class="kw">begin</span></div>
<div style="left:60px;top:121.0px;width:3px;height:3px;background:#f0f0f0;"></div>
 <svg style="left:3px;top:117.4px;" width="9" height="9" viewBox="0 0 9 9"><circle cx="4.500" cy="4.500" r="3.400" fill="#1212b4" stroke="#b8c0ff" stroke-width="0.900" stroke-dasharray="1.300 1.370"/></svg>
<div style="left:60px;top:140.0px;width:3px;height:3px;background:#f0f0f0;"></div>
<div class="code" style="left:141px;top:151.5px;"><span class="kw">for var</span> i := <span class="num">1</span> <span class="kw">to</span> <span class="num">6566</span> <span class="kw">do</span></div>
<div style="left:60px;top:159.0px;width:3px;height:3px;background:#f0f0f0;"></div>
 <svg style="left:3px;top:155.4px;" width="9" height="9" viewBox="0 0 9 9"><circle cx="4.500" cy="4.500" r="3.400" fill="#1212b4" stroke="#b8c0ff" stroke-width="0.900" stroke-dasharray="1.300 1.370"/></svg>
<div class="code" style="left:141px;top:170.5px;"><span class="kw">begin</span></div>
<div class="ln" style="right:1057px;top:170.5px;transform:scaleX(0.89);transform-origin:100% 50%;">200</div>
<div class="code" style="left:159px;top:189.5px;"><span class="kw">var</span></div>
<div style="left:60px;top:197.0px;width:3px;height:3px;background:#f0f0f0;"></div>
<div class="code" style="left:159px;top:208.5px;">bmp := Tbitmap.Create;<span class="cm">//dance</span></div>
<div style="left:60px;top:216.0px;width:3px;height:3px;background:#f0f0f0;"></div>
 <svg style="left:3px;top:212.4px;" width="9" height="9" viewBox="0 0 9 9"><circle cx="4.500" cy="4.500" r="3.400" fill="#1212b4" stroke="#b8c0ff" stroke-width="0.900" stroke-dasharray="1.300 1.370"/></svg>
<div class="code" style="left:159px;top:227.5px;"><span class="kw">var</span></div>
<div style="left:60px;top:235.0px;width:3px;height:3px;background:#f0f0f0;"></div>
<div class="code" style="left:159px;top:246.5px;">back := Tbitmap.Create;<span class="cm">//wave</span></div>
<div style="left:60px;top:254.0px;width:3px;height:3px;background:#f0f0f0;"></div>
 <svg style="left:3px;top:250.4px;" width="9" height="9" viewBox="0 0 9 9"><circle cx="4.500" cy="4.500" r="3.400" fill="#1212b4" stroke="#b8c0ff" stroke-width="0.900" stroke-dasharray="1.300 1.370"/></svg>
<div class="code" style="left:159px;top:265.5px;"><span class="kw">var</span></div>
<div style="left:58px;top:273.5px;width:6px;height:2px;background:#f0f0f0;"></div>
<div class="code" style="left:159px;top:284.5px;">hdc := GetDC(Hwnd);</div>
<div style="left:60px;top:292.0px;width:3px;height:3px;background:#f0f0f0;"></div>
 <svg style="left:3px;top:288.4px;" width="9" height="9" viewBox="0 0 9 9"><circle cx="4.500" cy="4.500" r="3.400" fill="#1212b4" stroke="#b8c0ff" stroke-width="0.900" stroke-dasharray="1.300 1.370"/></svg>
<div class="code" style="left:159px;top:303.5px;"><span class="kw">var</span></div>
<div style="left:60px;top:311.0px;width:3px;height:3px;background:#f0f0f0;"></div>
<div class="code" style="left:159px;top:322.5px;">ca := TCanvas.Create;</div>
<div style="left:60px;top:330.0px;width:3px;height:3px;background:#f0f0f0;"></div>
 <svg style="left:3px;top:326.4px;" width="9" height="9" viewBox="0 0 9 9"><circle cx="4.500" cy="4.500" r="3.400" fill="#1212b4" stroke="#b8c0ff" stroke-width="0.900" stroke-dasharray="1.300 1.370"/></svg>
<div class="code" style="left:159px;top:341.5px;">ca.Handle := hdc;</div>
<div style="left:60px;top:349.0px;width:3px;height:3px;background:#f0f0f0;"></div>
 <svg style="left:3px;top:345.4px;" width="9" height="9" viewBox="0 0 9 9"><circle cx="4.500" cy="4.500" r="3.400" fill="#1212b4" stroke="#b8c0ff" stroke-width="0.900" stroke-dasharray="1.300 1.370"/></svg>
<div class="code" style="left:159px;top:360.5px;"><span style="background:#2d62a6;">back</span>.LoadFromFile(<span class="str">'C:\Users\admin\Desktop\PlayMe\w10frames\a'</span> + i.ToString + <span class="str">'.bmp'</span>);</div>
<div class="ln" style="right:1057px;top:360.5px;transform:scaleX(0.89);transform-origin:100% 50%;">210</div>
 <svg style="left:3px;top:364.4px;" width="9" height="9" viewBox="0 0 9 9"><circle cx="4.500" cy="4.500" r="3.400" fill="#1212b4" stroke="#b8c0ff" stroke-width="0.900" stroke-dasharray="1.300 1.370"/></svg>
<div class="code" style="left:159px;top:379.5px;">bmp.LoadFromFile(<span class="str">'C:\Users\admin\Desktop\PlayMe\w10frames\'</span> + i.ToString + <span class="str">'.bmp'</span>);</div>
<div style="left:60px;top:387.0px;width:3px;height:3px;background:#f0f0f0;"></div>
 <svg style="left:3px;top:383.4px;" width="9" height="9" viewBox="0 0 9 9"><circle cx="4.500" cy="4.500" r="3.400" fill="#1212b4" stroke="#b8c0ff" stroke-width="0.900" stroke-dasharray="1.300 1.370"/></svg>
<div class="code" style="left:159px;top:398.5px;">bmp.Transparent := True;</div>
<div style="left:60px;top:406.0px;width:3px;height:3px;background:#f0f0f0;"></div>
 <svg style="left:3px;top:402.4px;" width="9" height="9" viewBox="0 0 9 9"><circle cx="4.500" cy="4.500" r="3.400" fill="#1212b4" stroke="#b8c0ff" stroke-width="0.900" stroke-dasharray="1.300 1.370"/></svg>
<div class="code" style="left:159px;top:417.5px;">bmp.TransparentColor := clwhite;</div>
<div style="left:60px;top:425.0px;width:3px;height:3px;background:#f0f0f0;"></div>
 <svg style="left:3px;top:421.4px;" width="9" height="9" viewBox="0 0 9 9"><circle cx="4.500" cy="4.500" r="3.400" fill="#1212b4" stroke="#b8c0ff" stroke-width="0.900" stroke-dasharray="1.300 1.370"/></svg>
<div class="code" style="left:159px;top:436.5px;">back.Canvas.Draw(<span class="num">0</span>, <span class="num">0</span>, bmp);</div>
<div style="left:60px;top:444.0px;width:3px;height:3px;background:#f0f0f0;"></div>
 <svg style="left:3px;top:440.4px;" width="9" height="9" viewBox="0 0 9 9"><circle cx="4.500" cy="4.500" r="3.400" fill="#1212b4" stroke="#b8c0ff" stroke-width="0.900" stroke-dasharray="1.300 1.370"/></svg>
<div class="code" style="left:159px;top:455.5px;">ca.Draw(<span class="num">0</span>, <span class="num">0</span>, back);</div>
<div style="left:58px;top:463.5px;width:6px;height:2px;background:#f0f0f0;"></div>
 <svg style="left:3px;top:459.4px;" width="9" height="9" viewBox="0 0 9 9"><circle cx="4.500" cy="4.500" r="3.400" fill="#1212b4" stroke="#b8c0ff" stroke-width="0.900" stroke-dasharray="1.300 1.370"/></svg>
<div class="code" style="left:159px;top:474.5px;">bmp.FreeImage;</div>
<div style="left:60px;top:482.0px;width:3px;height:3px;background:#f0f0f0;"></div>
 <svg style="left:3px;top:478.4px;" width="9" height="9" viewBox="0 0 9 9"><circle cx="4.500" cy="4.500" r="3.400" fill="#1212b4" stroke="#b8c0ff" stroke-width="0.900" stroke-dasharray="1.300 1.370"/></svg>
<div class="code" style="left:159px;top:493.5px;">bmp.Free;</div>
<div style="left:60px;top:501.0px;width:3px;height:3px;background:#f0f0f0;"></div>
 <svg style="left:3px;top:497.4px;" width="9" height="9" viewBox="0 0 9 9"><circle cx="4.500" cy="4.500" r="3.400" fill="#1212b4" stroke="#b8c0ff" stroke-width="0.900" stroke-dasharray="1.300 1.370"/></svg>
<div class="code" style="left:159px;top:512.5px;">back.FreeImage;</div>
<div style="left:60px;top:520.0px;width:3px;height:3px;background:#f0f0f0;"></div>
 <svg style="left:3px;top:516.4px;" width="9" height="9" viewBox="0 0 9 9"><circle cx="4.500" cy="4.500" r="3.400" fill="#1212b4" stroke="#b8c0ff" stroke-width="0.900" stroke-dasharray="1.300 1.370"/></svg>
<div class="code" style="left:159px;top:531.5px;">back.Free;</div>
<div style="left:60px;top:539.0px;width:3px;height:3px;background:#f0f0f0;"></div>
 <svg style="left:3px;top:535.4px;" width="9" height="9" viewBox="0 0 9 9"><circle cx="4.500" cy="4.500" r="3.400" fill="#1212b4" stroke="#b8c0ff" stroke-width="0.900" stroke-dasharray="1.300 1.370"/></svg>
<div class="code" style="left:159px;top:550.5px;">ReleaseDC(hwnd,hdc);</div>
<div class="ln" style="right:1057px;top:550.5px;transform:scaleX(0.89);transform-origin:100% 50%;">220</div>
 <svg style="left:3px;top:554.4px;" width="9" height="9" viewBox="0 0 9 9"><circle cx="4.500" cy="4.500" r="3.400" fill="#1212b4" stroke="#b8c0ff" stroke-width="0.900" stroke-dasharray="1.300 1.370"/></svg>
<div class="code" style="left:159px;top:569.5px;">ca.Free;</div>
<div style="left:60px;top:577.0px;width:3px;height:3px;background:#f0f0f0;"></div>
 <svg style="left:3px;top:573.4px;" width="9" height="9" viewBox="0 0 9 9"><circle cx="4.500" cy="4.500" r="3.400" fill="#1212b4" stroke="#b8c0ff" stroke-width="0.900" stroke-dasharray="1.300 1.370"/></svg>
<div class="code" style="left:159px;top:588.5px;">TThread.Sleep(<span class="num">30</span>);</div>
<div style="left:60px;top:596.0px;width:3px;height:3px;background:#f0f0f0;"></div>
 <svg style="left:3px;top:592.4px;" width="9" height="9" viewBox="0 0 9 9"><circle cx="4.500" cy="4.500" r="3.400" fill="#1212b4" stroke="#b8c0ff" stroke-width="0.900" stroke-dasharray="1.300 1.370"/></svg>
<div class="code" style="left:141px;top:607.5px;"><span class="kw">end;</span></div>
<div style="left:60px;top:615.0px;width:3px;height:3px;background:#f0f0f0;"></div>
 <svg style="left:3px;top:611.4px;" width="9" height="9" viewBox="0 0 9 9"><circle cx="4.500" cy="4.500" r="3.400" fill="#1212b4" stroke="#b8c0ff" stroke-width="0.900" stroke-dasharray="1.300 1.370"/></svg>
<div style="left:60px;top:634.0px;width:3px;height:3px;background:#f0f0f0;"></div>
<div class="code" style="left:123px;top:645.5px;"><span class="kw">end</span></div>
<div style="left:58px;top:653.5px;width:6px;height:2px;background:#f0f0f0;"></div>
<div style="left:60px;top:672.0px;width:3px;height:3px;background:#f0f0f0;"></div>
<div class="code" style="left:123px;top:683.5px;">).Start;</div>
<div style="left:60px;top:691.0px;width:3px;height:3px;background:#f0f0f0;"></div>
 <svg style="left:3px;top:687.4px;" width="9" height="9" viewBox="0 0 9 9"><circle cx="4.500" cy="4.500" r="3.400" fill="#1212b4" stroke="#b8c0ff" stroke-width="0.900" stroke-dasharray="1.300 1.370"/></svg>
<div style="left:60px;top:710.0px;width:3px;height:3px;background:#f0f0f0;"></div>
<div class="code" style="left:87px;top:721.5px;"><span class="kw">end;</span></div>
<div style="left:60px;top:729.0px;width:3px;height:3px;background:#f0f0f0;"></div>
 <svg style="left:3px;top:725.4px;" width="9" height="9" viewBox="0 0 9 9"><circle cx="4.500" cy="4.500" r="3.400" fill="#1212b4" stroke="#b8c0ff" stroke-width="0.900" stroke-dasharray="1.300 1.370"/></svg>
<div class="ln" style="right:1057px;top:740.5px;transform:scaleX(0.89);transform-origin:100% 50%;">230</div>
<div class="code" style="left:87px;top:759.5px;"><span class="kw">procedure</span> TForm1.Button4Click(Sender: TObject);</div>
<div style="left:60px;top:767.0px;width:3px;height:3px;background:#f0f0f0;"></div>
<div class="code" style="left:87px;top:778.5px;"><span class="kw">begin</span></div>
<div style="left:60px;top:786.0px;width:3px;height:3px;background:#f0f0f0;"></div>
 <svg style="left:3px;top:782.4px;" width="9" height="9" viewBox="0 0 9 9"><circle cx="4.500" cy="4.500" r="3.400" fill="#1212b4" stroke="#b8c0ff" stroke-width="0.900" stroke-dasharray="1.300 1.370"/></svg>
<div style="left:121px;top:114px;width:1px;height:549px;background:#50647c;"></div>
<div style="left:121px;top:114px;width:5px;height:1px;background:#50647c;"></div>
<div style="left:121px;top:663px;width:8px;height:1px;background:#50647c;"></div>
<div style="left:139px;top:171px;width:1px;height:454px;background:#5e726c;"></div>
<div style="left:139px;top:171px;width:5px;height:1px;background:#5e726c;"></div>
<div style="left:139px;top:625px;width:8px;height:1px;background:#5e726c;"></div>
<div style="left:79px;top:739px;width:6px;height:1px;background:#f0f0f0;"></div>
<div style="left:85px;top:760px;width:1px;height:29px;background:#5a6068;"></div>
<div style="left:75px;top:766px;width:9px;height:9px;border:1px solid #f0f0f0;box-sizing:border-box;background:#2e2e36;"></div>
<div style="left:77px;top:770px;width:5px;height:1px;background:#f0f0f0;"></div>
<svg style="left:15.5px;top:366px;" width="5" height="8" viewBox="0 0 5 8"><path d="M0.500 0.300 H5 V7.700 H0.500 V6.500 L3.200 4 L0.500 1.500z" fill="#f4f4f4"/></svg>
<svg style="left:341px;top:260px;" width="9" height="17" viewBox="0 0 9 17"><path d="M1.5 1 h2.5 M5 1 h2.5 M4.5 1.5 v14 M1.5 16 h2.5 M5 16 h2.5" stroke="#e8e8e8" stroke-width="1" fill="none"/></svg>
</div>
<div style="left:284px;top:984px;width:1140px;height:24px;background:#38424c;"></div>
<svg style="left:289px;top:989px;" width="10" height="14" viewBox="0 0 10 14"><path d="M1.5 1 L8 7 L1.5 13z" fill="#9a9ea4"/><path d="M1.5 1 L4 7 L1.5 13z" fill="#d8d8d8"/></svg>
<svg style="left:305px;top:989px;" width="13" height="13" viewBox="0 0 13 13"><circle cx="6.5" cy="6.5" r="5.5" fill="#e3212b"/><path d="M4 8 l3-4 M6 9 l2-3" stroke="#f47a7a" stroke-width="1"/></svg>
<div style="left:327px;top:991px;width:9px;height:9px;background:#b8b8b8;border-top:1px solid #e8e8e8;border-left:1px solid #e8e8e8;box-sizing:border-box;"></div>
<div style="left:343px;top:986px;width:1px;height:20px;background:#454f5a;"></div>
<div style="left:429px;top:986px;width:1px;height:20px;background:#454f5a;"></div>
<div style="left:528px;top:986px;width:1px;height:20px;background:#454f5a;"></div>
<div style="left:603px;top:986px;width:1px;height:20px;background:#454f5a;"></div>
<div style="left:667px;top:986px;width:1px;height:20px;background:#454f5a;"></div>
<div style="left:683px;top:986px;width:1px;height:20px;background:#454f5a;"></div>
<div style="left:803px;top:986px;width:1px;height:20px;background:#454f5a;"></div>
<div style="left:953px;top:986px;width:1px;height:20px;background:#454f5a;"></div>
<div style="left:1103px;top:986px;width:1px;height:20px;background:#454f5a;"></div>
<div class="t " style="left:372px;top:987.0px;font-size:12px;color:#fff;letter-spacing:-0.4px;">210:</div>
<div class="t " style="left:399.5px;top:987.0px;font-size:12px;color:#fff;letter-spacing:-0.6px;">13</div>
<div class="t " style="left:458px;top:987.0px;font-size:12px;color:#fff;">Insert</div>
<div class="t " style="left:620px;top:987.0px;font-size:12px;color:#fff;">Delphi</div>
<div class="t " style="left:724px;top:987.0px;font-size:12px;color:#fff;">ANSI</div>
<svg style="left:515px;top:994px;" width="8" height="5" viewBox="0 0 8 5"><path d="M0 0 h8 l-4 4.5z" fill="#f0f0f0"/></svg>
<svg style="left:671px;top:994px;" width="8" height="5" viewBox="0 0 8 5"><path d="M0 0 h8 l-4 4.5z" fill="#f0f0f0"/></svg>
<svg style="left:791px;top:994px;" width="8" height="5" viewBox="0 0 8 5"><path d="M0 0 h8 l-4 4.5z" fill="#f0f0f0"/></svg>
<div style="left:814px;top:996px;width:8px;height:2.5px;background:#4fa58c;"></div>
<div style="left:836px;top:997px;width:88px;height:1px;background:#7a8692;"></div>
<div style="left:856.5px;top:990px;width:7.5px;height:14.5px;background:#4a86cc;"></div>
<svg style="left:934px;top:990px;" width="13" height="13" viewBox="0 0 13 13"><path d="M6.5 0.5 v12 M0.5 6.5 h12" stroke="#3fae80" stroke-width="1.8"/></svg>
<svg style="left:960px;top:990px;" width="14" height="14" viewBox="0 0 14 14"><circle cx="7" cy="7" r="6" fill="#8a8e94"/><path d="M7 3.500 v4.500 M7 9.500 v1.500" stroke="#f4f4f4" stroke-width="1.800"/></svg>
<div class="t " style="left:988px;top:987.0px;font-size:11px;color:#6d7782;">0</div>
<svg style="left:1007px;top:990px;" width="16" height="14" viewBox="0 0 16 14"><path d="M8 1 L15 13 H1z" fill="#a8acb0"/><path d="M8 5 v4.5 M8 10.5 v1.5" stroke="#38424c" stroke-width="1.6"/></svg>
<div class="t " style="left:1036px;top:987.0px;font-size:11px;color:#6d7782;">0</div>
<svg style="left:1056px;top:990px;" width="14" height="14" viewBox="0 0 14 14"><circle cx="7" cy="7" r="6" fill="#c4c8cc"/><path d="M7 6 v5 M7 3 v1.6" stroke="#38424c" stroke-width="1.8"/></svg>
<div class="t " style="left:1084px;top:987.0px;font-size:11px;color:#6d7782;">0</div>
<div style="left:1264px;top:984px;width:48px;height:24px;background:#2c333d;"></div>
<div class="t " style="left:1273px;top:983.5px;font-size:12px;color:#6fb0f0;font-weight:bold;">Code</div>
<div class="t " style="left:1319px;top:983.5px;font-size:12px;color:#fff;">Design</div>
<div style="left:1365px;top:987px;width:1px;height:13px;background:#66727e;"></div>
<div class="t " style="left:1372px;top:983.5px;font-size:12px;color:#fff;">History</div>
<div class="t " style="left:1436px;top:101.0px;font-size:16px;color:#fff;letter-spacing:-0.2px;">Project1.dproj - Projects</div>
<div style="left:1432px;top:124px;width:296px;height:28px;background:#38424c;"></div>
<div style="left:1432px;top:152px;width:296px;height:366px;background:#2e2e36;"></div>
<svg style="left:1440px;top:129px;" width="18" height="18" viewBox="0 0 18 18"><path d="M5 1 v8 M1 5 h8 M2.2 2.2 l5.6 5.6 M7.8 2.2 l-5.6 5.6" stroke="#f0b860" stroke-width="1.1"/><rect x="4" y="10" width="9" height="6" fill="#f4f4f4"/><path d="M10 5 h5 v7" fill="none" stroke="#f4f4f4" stroke-width="1.6"/></svg>
<svg style="left:1469px;top:134px;" width="10" height="8" viewBox="0 0 10 8"><path d="M1 2 L5 6 L9 2" fill="none" stroke="#66727e" stroke-width="1.2"/></svg>
<svg style="left:1488px;top:129px;" width="18" height="18" viewBox="0 0 18 18"><path d="M1 3 h6 l2 2 h7 v10 h-15z" fill="#e8a84a"/><path d="M1 7 h15 v8 h-15z" fill="#f4c46a"/><path d="M13 9 v8 M9 13 h8" stroke="#3fae60" stroke-width="2"/></svg>
<svg style="left:1515px;top:129px;" width="18" height="18" viewBox="0 0 18 18"><path d="M1 3 h6 l2 2 h7 v10 h-15z" fill="#e8a84a"/><path d="M1 7 h15 v8 h-15z" fill="#f4c46a"/><path d="M8 12 h8 v4 h-8z" fill="#e06a20"/></svg>
<svg style="left:1541px;top:129px;" width="18" height="18" viewBox="0 0 18 18"><path d="M3 8 a6 6 0 0 1 11-3 M15 10 a6 6 0 0 1-11 3" fill="none" stroke="#3fae80" stroke-width="1.8"/><path d="M14 1 v5 h-5z M4 17 v-5 h5z" fill="#3fae80"/></svg>
<svg style="left:1564px;top:129px;" width="18" height="18" viewBox="0 0 18 18"><rect x="2" y="2" width="10" height="12" fill="none" stroke="#f0f0f0" stroke-width="1.3"/><circle cx="11" cy="12" r="4.5" fill="#3a74c0"/><path d="M4 5 h4" stroke="#f0f0f0"/></svg>
<svg style="left:1589px;top:129px;" width="18" height="18" viewBox="0 0 18 18"><rect x="1" y="2" width="14" height="12" fill="#f0f0f0"/><rect x="1" y="2" width="14" height="3" fill="#4a78b8"/><circle cx="7" cy="9" r="2.5" fill="#555"/><path d="M7 13 l3 3 l6-7" fill="none" stroke="#3fae60" stroke-width="2"/></svg>
<svg style="left:1612px;top:134px;" width="10" height="8" viewBox="0 0 10 8"><path d="M1 2 L5 6 L9 2" fill="none" stroke="#66727e" stroke-width="1.2"/></svg>
<svg style="left:1630px;top:129px;" width="18" height="18" viewBox="0 0 18 18"><path d="M2 5 l7-3 l7 3 l-7 3z M2 8.5 l7 3 l7-3 M2 12 l7 3 l7-3" fill="#4a88d8" stroke="#4a88d8" stroke-width="1.2"/><path d="M8 13 l3 3 l6-7" fill="none" stroke="#3fae60" stroke-width="2"/></svg>
<svg style="left:1653px;top:134px;" width="10" height="8" viewBox="0 0 10 8"><path d="M1 2 L5 6 L9 2" fill="none" stroke="#66727e" stroke-width="1.2"/></svg>
<svg style="left:1671px;top:129px;" width="18" height="18" viewBox="0 0 18 18"><rect x="1" y="2" width="14" height="12" fill="#f0f0f0"/><rect x="1" y="2" width="14" height="3" fill="#4a78b8"/><path d="M3 8 h9 M3 11 h6" stroke="#888"/><path d="M7 13 l3 3 l6-7" fill="none" stroke="#3fae60" stroke-width="2"/></svg>
<svg style="left:1694px;top:134px;" width="10" height="8" viewBox="0 0 10 8"><path d="M1 2 L5 6 L9 2" fill="none" stroke="#66727e" stroke-width="1.2"/></svg>
<div style="left:1432px;top:312px;width:296px;height:20px;background:#374555;"></div>
<svg style="left:1433px;top:153px;" width="18" height="17" viewBox="0 0 18 17"><path d="M3 5 L8 1 L11.5 5 L6.5 9z" fill="#4a78c0"/><path d="M11 8 L14.5 5.5 L17 9 L13.5 11.5z" fill="#8a5aa8"/><path d="M6 11.5 L10 8.5 L13 12 L9 15z" fill="#f0b860"/></svg>
<div class="t " style="left:1454px;top:151.5px;font-size:12px;color:#fff;">ProjectGroup1</div>
<svg style="left:1435px;top:177px;" width="12" height="10" viewBox="0 0 12 10"><path d="M1 3 L6 8 L11 3" fill="none" stroke="#66727e" stroke-width="1.2"/></svg>
<svg style="left:1450px;top:174px;" width="16" height="15" viewBox="0 0 16 15"><rect x="3" y="1" width="12" height="11" fill="#f4f4f4"/><rect x="3" y="1" width="12" height="2.5" fill="#4a78b8"/><path d="M9 5 h5 M9 7.5 h5 M9 10 h5" stroke="#555" stroke-width="0.9"/><path d="M1 6 h5 l2 2 v6 h-7z" fill="#f4f4f4" stroke="#2e2e36" stroke-width="0.8"/></svg>
<div class="t " style="left:1470px;top:171.5px;font-size:12px;color:#fff;font-weight:bold;">Project1.exe</div>
<svg style="left:1451px;top:197px;" width="12" height="10" viewBox="0 0 12 10"><path d="M1 3 L6 8 L11 3" fill="none" stroke="#66727e" stroke-width="1.2"/></svg>
<svg style="left:1467px;top:195px;" width="18" height="18" viewBox="0 0 18 18"><g transform="translate(9,9)"><rect x="-1.5" y="-6.5" width="3" height="3.5" fill="#8a8e94" transform="rotate(0)"/><rect x="-1.5" y="-6.5" width="3" height="3.5" fill="#8a8e94" transform="rotate(45)"/><rect x="-1.5" y="-6.5" width="3" height="3.5" fill="#8a8e94" transform="rotate(90)"/><rect x="-1.5" y="-6.5" width="3" height="3.5" fill="#8a8e94" transform="rotate(135)"/><rect x="-1.5" y="-6.5" width="3" height="3.5" fill="#8a8e94" transform="rotate(180)"/><rect x="-1.5" y="-6.5" width="3" height="3.5" fill="#8a8e94" transform="rotate(225)"/><rect x="-1.5" y="-6.5" width="3" height="3.5" fill="#8a8e94" transform="rotate(270)"/><rect x="-1.5" y="-6.5" width="3" height="3.5" fill="#8a8e94" transform="rotate(315)"/><circle r="4.2" fill="#8a8e94"/><circle r="1.4" fill="#2e2e36"/></g></svg>
<svg style="left:1466px;top:194px;" width="8" height="8" viewBox="0 0 8 8"><circle cx="4" cy="4" r="2.5" fill="none" stroke="#5a8fdc" stroke-width="1.6" stroke-dasharray="1.5 1"/></svg>
<div class="t " style="left:1486px;top:191.5px;font-size:12px;color:#fff;letter-spacing:-0.12px;">Build Configurations (Release)</div>
<svg style="left:1481px;top:213px;" width="18" height="18" viewBox="0 0 18 18"><g transform="translate(9,9)"><rect x="-1.5" y="-7.5" width="3" height="3.5" fill="#8a8e94" transform="rotate(0)"/><rect x="-1.5" y="-7.5" width="3" height="3.5" fill="#8a8e94" transform="rotate(45)"/><rect x="-1.5" y="-7.5" width="3" height="3.5" fill="#8a8e94" transform="rotate(90)"/><rect x="-1.5" y="-7.5" width="3" height="3.5" fill="#8a8e94" transform="rotate(135)"/><rect x="-1.5" y="-7.5" width="3" height="3.5" fill="#8a8e94" transform="rotate(180)"/><rect x="-1.5" y="-7.5" width="3" height="3.5" fill="#8a8e94" transform="rotate(225)"/><rect x="-1.5" y="-7.5" width="3" height="3.5" fill="#8a8e94" transform="rotate(270)"/><rect x="-1.5" y="-7.5" width="3" height="3.5" fill="#8a8e94" transform="rotate(315)"/><circle r="5.2" fill="#8a8e94"/><circle r="2.4" fill="#2e2e36"/></g></svg>
<div class="t " style="left:1502px;top:211.5px;font-size:12px;color:#fff;">Debug</div>
<svg style="left:1481px;top:233px;" width="18" height="18" viewBox="0 0 18 18"><g transform="translate(9,9)"><rect x="-1.5" y="-7.5" width="3" height="3.5" fill="#8a8e94" transform="rotate(0)"/><rect x="-1.5" y="-7.5" width="3" height="3.5" fill="#8a8e94" transform="rotate(45)"/><rect x="-1.5" y="-7.5" width="3" height="3.5" fill="#8a8e94" transform="rotate(90)"/><rect x="-1.5" y="-7.5" width="3" height="3.5" fill="#8a8e94" transform="rotate(135)"/><rect x="-1.5" y="-7.5" width="3" height="3.5" fill="#8a8e94" transform="rotate(180)"/><rect x="-1.5" y="-7.5" width="3" height="3.5" fill="#8a8e94" transform="rotate(225)"/><rect x="-1.5" y="-7.5" width="3" height="3.5" fill="#8a8e94" transform="rotate(270)"/><rect x="-1.5" y="-7.5" width="3" height="3.5" fill="#8a8e94" transform="rotate(315)"/><circle r="5.2" fill="#8a8e94"/><circle r="2.4" fill="#2e2e36"/></g></svg>
<div class="t " style="left:1502px;top:231.5px;font-size:12px;color:#fff;font-weight:bold;">Release</div>
<svg style="left:1452px;top:256px;" width="10" height="12" viewBox="0 0 10 12"><path d="M3 1 L8 6 L3 11" fill="none" stroke="#8a96a2" stroke-width="1.2"/></svg>
<svg style="left:1465px;top:254px;" width="18" height="16" viewBox="0 0 18 16"><path d="M2 4 l7-2.5 l7 2.5 l-7 2.5z M2 8 l7 2.5 l7-2.5 M2 11.5 l7 2.5 l7-2.5" fill="#4a88d8" stroke="#4a88d8" stroke-width="1.6" stroke-linejoin="round"/></svg>
<div class="t " style="left:1486px;top:251.5px;font-size:12px;color:#fff;">Target Platforms (Windows 32-bit)</div>
<svg style="left:1468px;top:274px;" width="13" height="15" viewBox="0 0 13 15"><path d="M1 0.5 h7.5 l3.5 3.5 v10.5 h-11z" fill="#f4f4f4"/><path d="M3 5 h4 M3 7.5 h7 M3 10 h7 M3 12.5 h7" stroke="#555" stroke-width="1"/></svg>
<div class="t " style="left:1486px;top:271.5px;font-size:12px;color:#fff;">hashMap.pas</div>
<svg style="left:1468px;top:294px;" width="13" height="15" viewBox="0 0 13 15"><path d="M1 0.5 h7.5 l3.5 3.5 v10.5 h-11z" fill="#f4f4f4"/><path d="M3 5 h4 M3 7.5 h7 M3 10 h7 M3 12.5 h7" stroke="#555" stroke-width="1"/></svg>
<div class="t " style="left:1486px;top:291.5px;font-size:12px;color:#fff;">MyBitMap.pas</div>
<svg style="left:1452px;top:316px;" width="10" height="12" viewBox="0 0 10 12"><path d="M3 1 L8 6 L3 11" fill="none" stroke="#e0e4e8" stroke-width="1.2"/></svg>
<svg style="left:1466px;top:314px;" width="16" height="15" viewBox="0 0 16 15"><path d="M5 0.5 h6.5 l3 3 v11 h-9.5z" fill="#f4f4f4"/><rect x="1" y="6" width="8" height="8.5" fill="#f4f4f4" stroke="#374555" stroke-width="1"/><path d="M2.5 9 h5 M2.5 11.5 h5" stroke="#374555" stroke-width="1.2"/></svg>
<div class="t " style="left:1486px;top:311.5px;font-size:12px;color:#fff;">Unit1.pas</div>
<div style="left:1432px;top:518px;width:296px;height:47px;background:#38424c;"></div>
<div class="t " style="left:1440px;top:518.5px;font-size:12px;color:#fff;">CodeInsight: Done</div>
<div class="t " style="left:1441px;top:543.5px;font-size:12px;color:#fff;letter-spacing:0.07px;">F:\Delphi\WorkSpace\垃圾堆\FireDac\Unit1.pas</div>
<div style="left:1432px;top:565px;width:296px;height:24px;background:#38424c;"></div>
<div style="left:1432px;top:565px;width:112px;height:24px;background:#2c333d;"></div>
<div class="t " style="left:1439px;top:566.5px;font-size:12px;color:#5ea4ee;font-weight:bold;letter-spacing:-0.05px;">Project1.dproj -...</div>
<div class="t " style="left:1550px;top:566.5px;font-size:12px;color:#fff;">Model View</div>
<div style="left:1622px;top:569px;width:1px;height:16px;background:#66727e;"></div>
<div class="t " style="left:1629px;top:566.5px;font-size:12px;color:#fff;">Data Explorer</div>
<div style="left:1709px;top:569px;width:1px;height:16px;background:#66727e;"></div>
<div class="t " style="left:1713px;top:566.5px;font-size:12px;color:#fff;">Mu</div>
<div class="t " style="left:1436px;top:606.0px;font-size:15px;color:#fff;letter-spacing:-0.1px;">Palette</div>
<div style="left:1432px;top:629px;width:296px;height:28px;background:#38424c;"></div>
<div style="left:1628px;top:630px;width:100px;height:26px;background:#2e2e36;"></div>
<svg style="left:1438px;top:634px;" width="17" height="18" viewBox="0 0 17 18"><path d="M6 1.5 h6 l3 3 v11 h-9z" fill="#f4f4f4"/><rect x="1" y="6" width="9" height="11" fill="#8a4aa8"/><path d="M3.5 8 v7 l2-2 l1.5 3 l1-0.5 l-1.5-3 h2.5z" fill="#fff"/></svg>
<svg style="left:1461px;top:638px;" width="10" height="8" viewBox="0 0 10 8"><path d="M1 2 L5 6 L9 2" fill="none" stroke="#66727e" stroke-width="1.2"/></svg>
<div style="left:1475px;top:631px;width:24px;height:24px;background:#46525e;"></div>
<div style="left:1480px;top:635px;width:15.5px;height:16px;background:#9050ae;"></div>
<svg style="left:1481.5px;top:636px;" width="12" height="14" viewBox="0 0 12 14"><path d="M2.5 1 v10.5 l2.8-2.6 l2 4 l1.6-0.8 l-2-3.9 h3.6z" fill="#fff"/></svg>
<div style="left:1432px;top:657px;width:296px;height:351px;background:#2e2e36;"></div>
<svg style="left:1439px;top:662.0px;" width="10" height="12" viewBox="0 0 10 12"><path d="M3 1 L8 6 L3 11" fill="none" stroke="#7a8692" stroke-width="1.2"/></svg>
<div class="t " style="left:1456px;top:657.5px;font-size:12px;color:#fff;">Delphi | Individual Files</div>
<svg style="left:1439px;top:682.0px;" width="10" height="12" viewBox="0 0 10 12"><path d="M3 1 L8 6 L3 11" fill="none" stroke="#7a8692" stroke-width="1.2"/></svg>
<div class="t " style="left:1456px;top:677.5px;font-size:12px;color:#fff;">Modeling</div>
<svg style="left:1439px;top:702.0px;" width="10" height="12" viewBox="0 0 10 12"><path d="M3 1 L8 6 L3 11" fill="none" stroke="#7a8692" stroke-width="1.2"/></svg>
<div class="t " style="left:1456px;top:697.5px;font-size:12px;color:#fff;">Delphi | Windows</div>
<svg style="left:1439px;top:722.0px;" width="10" height="12" viewBox="0 0 10 12"><path d="M3 1 L8 6 L3 11" fill="none" stroke="#7a8692" stroke-width="1.2"/></svg>
<div class="t " style="left:1456px;top:717.5px;font-size:12px;color:#fff;">Delphi | Multi-Device</div>
<svg style="left:1439px;top:742.0px;" width="10" height="12" viewBox="0 0 10 12"><path d="M3 1 L8 6 L3 11" fill="none" stroke="#7a8692" stroke-width="1.2"/></svg>
<div class="t " style="left:1456px;top:737.5px;font-size:12px;color:#fff;">Delphi</div>
<svg style="left:1439px;top:762.0px;" width="10" height="12" viewBox="0 0 10 12"><path d="M3 1 L8 6 L3 11" fill="none" stroke="#7a8692" stroke-width="1.2"/></svg>
<div class="t " style="left:1456px;top:757.5px;font-size:12px;color:#fff;">Other | Web</div>
<svg style="left:1439px;top:782.0px;" width="10" height="12" viewBox="0 0 10 12"><path d="M3 1 L8 6 L3 11" fill="none" stroke="#7a8692" stroke-width="1.2"/></svg>
<div class="t " style="left:1456px;top:777.5px;font-size:12px;color:#fff;">Other</div>
<svg style="left:1439px;top:802.0px;" width="10" height="12" viewBox="0 0 10 12"><path d="M3 1 L8 6 L3 11" fill="none" stroke="#7a8692" stroke-width="1.2"/></svg>
<div class="t " style="left:1456px;top:797.5px;font-size:12px;color:#fff;">Delphi | DataSnap</div>
<svg style="left:1439px;top:822.0px;" width="10" height="12" viewBox="0 0 10 12"><path d="M3 1 L8 6 L3 11" fill="none" stroke="#7a8692" stroke-width="1.2"/></svg>
<div class="t " style="left:1456px;top:817.5px;font-size:12px;color:#fff;">Delphi | Web</div>
<svg style="left:1439px;top:842.0px;" width="10" height="12" viewBox="0 0 10 12"><path d="M3 1 L8 6 L3 11" fill="none" stroke="#7a8692" stroke-width="1.2"/></svg>
<div class="t " style="left:1456px;top:837.5px;font-size:12px;color:#fff;">Delphi | RAD Server</div>
<svg style="left:1439px;top:862.0px;" width="10" height="12" viewBox="0 0 10 12"><path d="M3 1 L8 6 L3 11" fill="none" stroke="#7a8692" stroke-width="1.2"/></svg>
<div class="t " style="left:1456px;top:857.5px;font-size:12px;color:#fff;">Delphi | ActiveX</div>
<svg style="left:1439px;top:882.0px;" width="10" height="12" viewBox="0 0 10 12"><path d="M3 1 L8 6 L3 11" fill="none" stroke="#7a8692" stroke-width="1.2"/></svg>
<div class="t " style="left:1456px;top:877.5px;font-size:12px;color:#fff;">Delphi | Inheritable Items</div>
<svg style="left:1439px;top:902.0px;" width="10" height="12" viewBox="0 0 10 12"><path d="M3 1 L8 6 L3 11" fill="none" stroke="#7a8692" stroke-width="1.2"/></svg>
<div class="t " style="left:1456px;top:897.5px;font-size:12px;color:#fff;">Delphi | Database</div>
<svg style="left:1439px;top:922.0px;" width="10" height="12" viewBox="0 0 10 12"><path d="M3 1 L8 6 L3 11" fill="none" stroke="#7a8692" stroke-width="1.2"/></svg>
<div class="t " style="left:1456px;top:917.5px;font-size:12px;color:#fff;">Delphi | IntraWeb</div>
<svg style="left:1439px;top:942.0px;" width="10" height="12" viewBox="0 0 10 12"><path d="M3 1 L8 6 L3 11" fill="none" stroke="#7a8692" stroke-width="1.2"/></svg>
<div class="t " style="left:1456px;top:937.5px;font-size:12px;color:#fff;">Delphi | Projects</div>
<div style="left:0px;top:1040px;width:1728px;height:40px;background:#1e2b38;"></div>
<div style="left:495.5px;top:1040px;width:69.5px;height:40px;background:#47515c;"></div>
<svg style="left:12.3px;top:1050.3px;" width="14" height="21" viewBox="0 0 14 21"><path d="M0.500 0.500 h11.500 v9 l1.500 1 v7.500 h-9.500 l-3.500 2.500z" fill="#f3d06a"/><path d="M0.500 0.500 h3 v18 l-3 2z" fill="#fae9a2"/><path d="M3.500 1 h8 v8.500 l1.500 1 v3 h-9.500z" fill="#f8dc82"/></svg>
<div class="t " style="left:37px;top:1049.5px;font-size:12px;color:#fff;">w1...</div>
<svg style="left:82.3px;top:1050.3px;" width="14" height="21" viewBox="0 0 14 21"><path d="M0.500 0.500 h11.500 v9 l1.500 1 v7.500 h-9.500 l-3.500 2.500z" fill="#f3d06a"/><path d="M0.500 0.500 h3 v18 l-3 2z" fill="#fae9a2"/><path d="M3.500 1 h8 v8.500 l1.500 1 v3 h-9.500z" fill="#f8dc82"/></svg>
<div class="t " style="left:107px;top:1049.5px;font-size:12px;color:#fff;">Do...</div>
<svg style="left:152.3px;top:1050.3px;" width="14" height="21" viewBox="0 0 14 21"><path d="M0.500 0.500 h11.500 v9 l1.500 1 v7.500 h-9.500 l-3.500 2.500z" fill="#f3d06a"/><path d="M0.500 0.500 h3 v18 l-3 2z" fill="#fae9a2"/><path d="M3.500 1 h8 v8.500 l1.500 1 v3 h-9.500z" fill="#f8dc82"/></svg>
<div class="t " style="left:177px;top:1049.5px;font-size:12px;color:#fff;">Lab...</div>
<svg style="left:222.3px;top:1050.3px;" width="14" height="21" viewBox="0 0 14 21"><path d="M0.500 0.500 h11.500 v9 l1.500 1 v7.500 h-9.500 l-3.500 2.500z" fill="#f3d06a"/><path d="M0.500 0.500 h3 v18 l-3 2z" fill="#fae9a2"/><path d="M3.500 1 h8 v8.500 l1.500 1 v3 h-9.500z" fill="#f8dc82"/></svg>
<div class="t " style="left:247px;top:1049.5px;font-size:12px;color:#fff;">De...</div>
<svg style="left:292.3px;top:1050.3px;" width="14" height="21" viewBox="0 0 14 21"><path d="M0.500 0.500 h11.500 v9 l1.500 1 v7.500 h-9.500 l-3.500 2.500z" fill="#f3d06a"/><path d="M0.500 0.500 h3 v18 l-3 2z" fill="#fae9a2"/><path d="M3.500 1 h8 v8.500 l1.500 1 v3 h-9.500z" fill="#f8dc82"/></svg>
<div class="t " style="left:317px;top:1049.5px;font-size:12px;color:#fff;">Ca...</div>
<svg style="left:362.3px;top:1050.3px;" width="14" height="21" viewBox="0 0 14 21"><path d="M0.500 0.500 h11.500 v9 l1.500 1 v7.500 h-9.500 l-3.500 2.500z" fill="#f3d06a"/><path d="M0.500 0.500 h3 v18 l-3 2z" fill="#fae9a2"/><path d="M3.500 1 h8 v8.500 l1.500 1 v3 h-9.500z" fill="#f8dc82"/></svg>
<div class="t " style="left:387px;top:1049.5px;font-size:12px;color:#fff;">JS-...</div>
<div style="left:7.3px;top:1077.5px;width:61px;height:2.5px;background:#8abbe6;"></div>
<div style="left:77.3px;top:1077.5px;width:61px;height:2.5px;background:#8abbe6;"></div>
<div style="left:147.3px;top:1077.5px;width:61px;height:2.5px;background:#8abbe6;"></div>
<div style="left:217.3px;top:1077.5px;width:61px;height:2.5px;background:#8abbe6;"></div>
<div style="left:287.3px;top:1077.5px;width:61px;height:2.5px;background:#8abbe6;"></div>
<div style="left:357.3px;top:1077.5px;width:61px;height:2.5px;background:#8abbe6;"></div>
<div style="left:427.3px;top:1077.5px;width:61px;height:2.5px;background:#8abbe6;"></div>
<div style="left:495.7px;top:1077.5px;width:69.3px;height:2.5px;background:#9cc6ec;"></div>
<div style="left:570.1px;top:1077.5px;width:61.5px;height:2.5px;background:#8abbe6;"></div>
<div style="left:641.0px;top:1077.5px;width:61.5px;height:2.5px;background:#8abbe6;"></div>
<div style="left:711.9px;top:1077.5px;width:61.5px;height:2.5px;background:#8abbe6;"></div>
<div style="left:782.7px;top:1077.5px;width:61.5px;height:2.5px;background:#8abbe6;"></div>
<div style="left:853.5px;top:1077.5px;width:61.5px;height:2.5px;background:#8abbe6;"></div>
<div style="left:924.4px;top:1077.5px;width:61.5px;height:2.5px;background:#8abbe6;"></div>
<div style="left:995.2px;top:1077.5px;width:61.5px;height:2.5px;background:#8abbe6;"></div>
<div style="left:1066.1px;top:1077.5px;width:61.5px;height:2.5px;background:#8abbe6;"></div>
<div style="left:1136.9px;top:1077.5px;width:61.5px;height:2.5px;background:#8abbe6;"></div>
<div style="left:1207.8px;top:1077.5px;width:61.5px;height:2.5px;background:#8abbe6;"></div>
<div style="left:1278.7px;top:1077.5px;width:61.5px;height:2.5px;background:#8abbe6;"></div>
<div style="left:1349.5px;top:1077.5px;width:61.5px;height:2.5px;background:#8abbe6;"></div>
<svg style="left:430px;top:1047px;" width="26" height="26" viewBox="0 0 26 26"><circle cx="13" cy="13" r="12" fill="#1f7fd0"/><path d="M2 15 a11 11 0 0 1 22-4 q-1 5-8 5 q-3 0-3-3 q0-5 6-4 q-3-5-9-3 q-7 3-8 9z" fill="#42d0a0"/><path d="M2 15 q0 9 10 10 q6 0 10-5 q-6 3-11-1 q-3-3-1-8 q-5 0-8 4z" fill="#1560b8"/></svg>
<div class="t " style="left:458px;top:1049.5px;font-size:12px;color:#fff;">什...</div>
<svg style="left:500px;top:1047px;" width="26" height="26" viewBox="0 0 26 26"><circle cx="13" cy="13" r="12.500" fill="#a81822"/><circle cx="13" cy="13" r="9.500" fill="#d42a34"/><path d="M8 20 q-1-8 4-12 q3-2 7-1 q-5 1-6 5 q3-3 7-2 q-5 2-5 6 q2-2 5-1 q-4 2-4 6z" fill="#fff"/><path d="M12 6 q3-3 8-2 q-4 1-5 3z" fill="#fff"/></svg>
<div class="t " style="left:529px;top:1049.5px;font-size:12px;color:#fff;">Pro...</div>
<svg style="left:571px;top:1046px;" width="26" height="28" viewBox="0 0 26 28"><path d="M4 5 l14-3 l5 18 l-9 7 l-12-8z" fill="#3fae8a"/><path d="M7 3 l12-1 l4 17 l-9 6z" fill="#c8f0e0"/><path d="M14 25 l1-6 l8 0z" fill="#e8fff4"/></svg>
<div class="t " style="left:600px;top:1049.5px;font-size:12px;color:#fff;">* 未...</div>
<svg style="left:644px;top:1047px;" width="26" height="26" viewBox="0 0 26 26"><circle cx="14" cy="10.500" r="6.500" fill="none" stroke="#f08a24" stroke-width="3.200"/><path d="M9 15.500 L3 22.500" stroke="#f08a24" stroke-width="3.800" stroke-linecap="round"/></svg>
<div class="t " style="left:671px;top:1049.5px;font-size:12px;color:#fff;">js-e...</div>
<svg style="left:713px;top:1047px;" width="26" height="26" viewBox="0 0 26 26"><rect x="1" y="1" width="24" height="24" rx="3" fill="#f07a3a"/><rect x="4" y="4" width="18" height="15" fill="#f4d8f0"/><text x="6" y="15" font-family="Liberation Sans" font-weight="bold" font-size="10" fill="#b020a0">FB</text><path d="M4 21 h18" stroke="#c04a10" stroke-width="2"/></svg>
<div class="t " style="left:742px;top:1049.5px;font-size:12px;color:#fff;">Vis...</div>
<svg style="left:784px;top:1048px;" width="26" height="24" viewBox="0 0 26 24"><path d="M1 4 q0-2 2-2 h6 l2 2 h12 q2 0 2 2 v10 h-24z" fill="#62b2f0"/><path d="M1 8 l10-5 h6 l-12 12 h-4z" fill="#8accf8" opacity="0.600"/><rect x="1" y="14.500" width="24" height="2.500" fill="#a8c860"/><path d="M1 17 h24 v4 q0 2-2 2 h-20 q-2 0-2-2z" fill="#f0c444"/><rect x="15.500" y="2" width="5" height="21" fill="#8a4a22"/><rect x="16" y="14" width="4" height="5" fill="#5a2a10"/><rect x="17" y="15.500" width="2" height="2" fill="#f0d080"/></svg>
<div class="t " style="left:813px;top:1049.5px;font-size:12px;color:#fff;">Pla...</div>
<svg style="left:854px;top:1048px;" width="26" height="24" viewBox="0 0 26 24"><path d="M1 4 q0-2 2-2 h6 l2 2 h12 q2 0 2 2 v10 h-24z" fill="#62b2f0"/><path d="M1 8 l10-5 h6 l-12 12 h-4z" fill="#8accf8" opacity="0.600"/><rect x="1" y="14.500" width="24" height="2.500" fill="#a8c860"/><path d="M1 17 h24 v4 q0 2-2 2 h-20 q-2 0-2-2z" fill="#f0c444"/><rect x="15.500" y="2" width="5" height="21" fill="#8a4a22"/><rect x="16" y="14" width="4" height="5" fill="#5a2a10"/><rect x="17" y="15.500" width="2" height="2" fill="#f0d080"/></svg>
<div class="t " style="left:883px;top:1049.5px;font-size:12px;color:#fff;">Lab...</div>
<svg style="left:926px;top:1051px;" width="23" height="17" viewBox="0 0 23 17"><rect x="0.500" y="0.500" width="22" height="16" fill="#0a0a0a" stroke="#8a8e92"/><rect x="1" y="1" width="21" height="2" fill="#c8c8c8"/><path d="M3 6 h3.500 M7.500 6.500 l2 1 M11 7.500 h6" stroke="#e0e0e0" stroke-width="1.200"/></svg>
<div class="t " style="left:954px;top:1049.5px;font-size:12px;color:#fff;">命...</div>
<svg style="left:997.5px;top:1048px;" width="22.08" height="23.92" viewBox="0 0 24 26"><rect x="0" y="0" width="24" height="26" fill="#2a78d0"/><circle cx="12" cy="7" r="4" fill="#bfe0ff"/><path d="M8 12 h8 l2 12 h-12z" fill="#5aa8f0"/><path d="M2 2 l8 6 M22 2 l-8 6" stroke="#1a50a0" stroke-width="2"/></svg>
<div class="t " style="left:1025px;top:1049.5px;font-size:12px;color:#fff;">彗...</div>
<svg style="left:1068px;top:1048px;" width="22.56" height="24.44" viewBox="0 0 24 26"><rect width="24" height="26" fill="#f4f4f4"/><circle cx="13" cy="13" r="9" fill="none" stroke="#d8d8d8" stroke-width="3" stroke-dasharray="3 2"/><text x="2" y="20" font-family="Noto Sans CJK SC" font-weight="bold" font-size="15" fill="#d02020">易</text></svg>
<div class="t " style="left:1095px;top:1049.5px;font-size:12px;color:#fff;">易...</div>
<svg style="left:1137px;top:1047px;" width="28" height="26" viewBox="0 0 28 26"><rect x="5" y="3" width="20" height="15" fill="#e8eef4" stroke="#a8b0b8"/><path d="M7 14 l3-6 l3 5 l3-8 l3 7 l3-3" fill="none" stroke="#3a78c8" stroke-width="1.4"/><rect x="1" y="8" width="8" height="12" fill="#c8d0d8"/><path d="M10 21 h12 v3 h-12z" fill="#b0b8c0"/></svg>
<div class="t " style="left:1166px;top:1049.5px;font-size:12px;color:#fff;">任...</div>
<svg style="left:1210.8px;top:1049px;" width="22.56" height="22.56" viewBox="0 0 24 24"><rect width="24" height="24" rx="1.5" fill="#2f8fe8"/><path d="M0 20 l9-11 l8 9 l3-3 l4 4 v5 h-24z" fill="#1458b0"/><path d="M0 24 l9-15 l10 15z" fill="#0f3f88"/><circle cx="18" cy="6" r="2.2" fill="#bfe4ff"/></svg>
<div class="t " style="left:1237px;top:1049.5px;font-size:12px;color:#fff;">照片</div>
<svg style="left:1280.8px;top:1049px;" width="22.56" height="22.56" viewBox="0 0 24 24"><rect width="24" height="24" rx="1.5" fill="#2f8fe8"/><path d="M0 20 l9-11 l8 9 l3-3 l4 4 v5 h-24z" fill="#1458b0"/><path d="M0 24 l9-15 l10 15z" fill="#0f3f88"/><circle cx="18" cy="6" r="2.2" fill="#bfe4ff"/></svg>
<div class="t " style="left:1307px;top:1049.5px;font-size:12px;color:#fff;">照片</div>
<svg style="left:1350px;top:1046px;" width="28" height="28" viewBox="0 0 28 28"><circle cx="12" cy="13" r="9" fill="none" stroke="#555" stroke-width="5"/><circle cx="18" cy="19" r="6" fill="#f01828"/></svg>
<div class="t " style="left:1379px;top:1049.5px;font-size:12px;color:#fff;">Ca...</div>
<svg style="left:1422px;top:1054px;" width="14" height="9" viewBox="0 0 14 9"><path d="M1.5 8 L7 2 L12.5 8" fill="none" stroke="#fff" stroke-width="1.4"/></svg>
<svg style="left:1445px;top:1050px;" width="14" height="20" viewBox="0 0 14 20"><rect x="4" y="1" width="6" height="11" rx="3" fill="#f0f0f0"/><path d="M1.5 9 a5.5 5.5 0 0 0 11 0 M7 15 v3 M4 18.5 h6" fill="none" stroke="#f0f0f0" stroke-width="1.3"/></svg>
<svg style="left:1468px;top:1050px;" width="18" height="18" viewBox="0 0 18 18"><path d="M3 18 v-9 l1-7 l3 4 h4 l3-4 l1 7 v9z" fill="#e8c09a"/><circle cx="7" cy="10" r="1" fill="#333"/><circle cx="12" cy="10" r="1" fill="#333"/></svg>
<svg style="left:1492px;top:1052px;" width="17" height="16" viewBox="0 0 17 16"><rect x="0" y="0" width="7.5" height="7" fill="#e8d8a8"/><rect x="9" y="0" width="7.5" height="7" fill="#c8ccd0"/><rect x="0" y="8.5" width="7.5" height="7" fill="#f4f4f4"/><rect x="9" y="8.5" width="7.5" height="7" fill="#d8dce0"/></svg>
<svg style="left:1517px;top:1051px;" width="15" height="17" viewBox="0 0 15 17"><path d="M7.5 0.5 l7 2.5 q0 9-7 13.5 q-7-4.500-7-13.500z" fill="#f0b030"/><path d="M7.5 4 q-3 3-2 7 q2 3 4 0 q1-4-2-7z" fill="#fff"/></svg>
<svg style="left:1540px;top:1051px;" width="17" height="17" viewBox="0 0 17 17"><circle cx="10.5" cy="6.500" r="4.500" fill="none" stroke="#f08a24" stroke-width="2.600"/><path d="M7 10 L2 15.500" stroke="#f08a24" stroke-width="3" stroke-linecap="round"/></svg>
<svg style="left:1564px;top:1050px;" width="19" height="18" viewBox="0 0 19 18"><rect x="0" y="0" width="13" height="13" rx="2" fill="#2a8ae0"/><path d="M6.500 2 v9 M2 6.500 h9 M3.500 3.500 l6 6 M9.500 3.500 l-6 6" stroke="#fff" stroke-width="1.300"/><circle cx="14" cy="13.500" r="4" fill="#f0b070"/><path d="M12 13.500 h4" stroke="#fff" stroke-width="1.200"/></svg>
<svg style="left:1588px;top:1052px;" width="20" height="16" viewBox="0 0 20 16"><rect x="4.500" y="1.500" width="13" height="9" fill="none" stroke="#f0f0f0" stroke-width="1.300"/><path d="M11 10.500 v3 M7 14.500 h8" stroke="#f0f0f0" stroke-width="1.300"/><rect x="0.500" y="0.500" width="4" height="5" fill="#1d2a38" stroke="#f0f0f0"/></svg>
<svg style="left:1612px;top:1052px;" width="20" height="16" viewBox="0 0 20 16"><path d="M1 6 h3 l4-4 v12 l-4-4 h-3z" fill="none" stroke="#f0f0f0" stroke-width="1.200"/><path d="M10.500 5.500 q2 2.500 0 5 M13 3.500 q3.500 4.500 0 9 M15.500 1.500 q5 6.500 0 13" fill="none" stroke="#f0f0f0" stroke-width="1.100"/></svg>
<div class="t " style="left:1637px;top:1049.5px;font-size:15px;color:#fff;font-weight:bold;">英</div>
<div style="left:1664.5px;top:1052.5px;width:15.5px;height:15.5px;background:#fff;"></div>
<div class="t " style="left:1665px;top:1049.5px;font-size:14px;color:#000;">拼</div>
<div class="t " style="left:1718px;top:1040.0px;font-size:12px;color:#fff;">0:</div>
<div class="t " style="left:1697px;top:1061.0px;font-size:12px;color:#fff;">2021-</div>
</body></html>
